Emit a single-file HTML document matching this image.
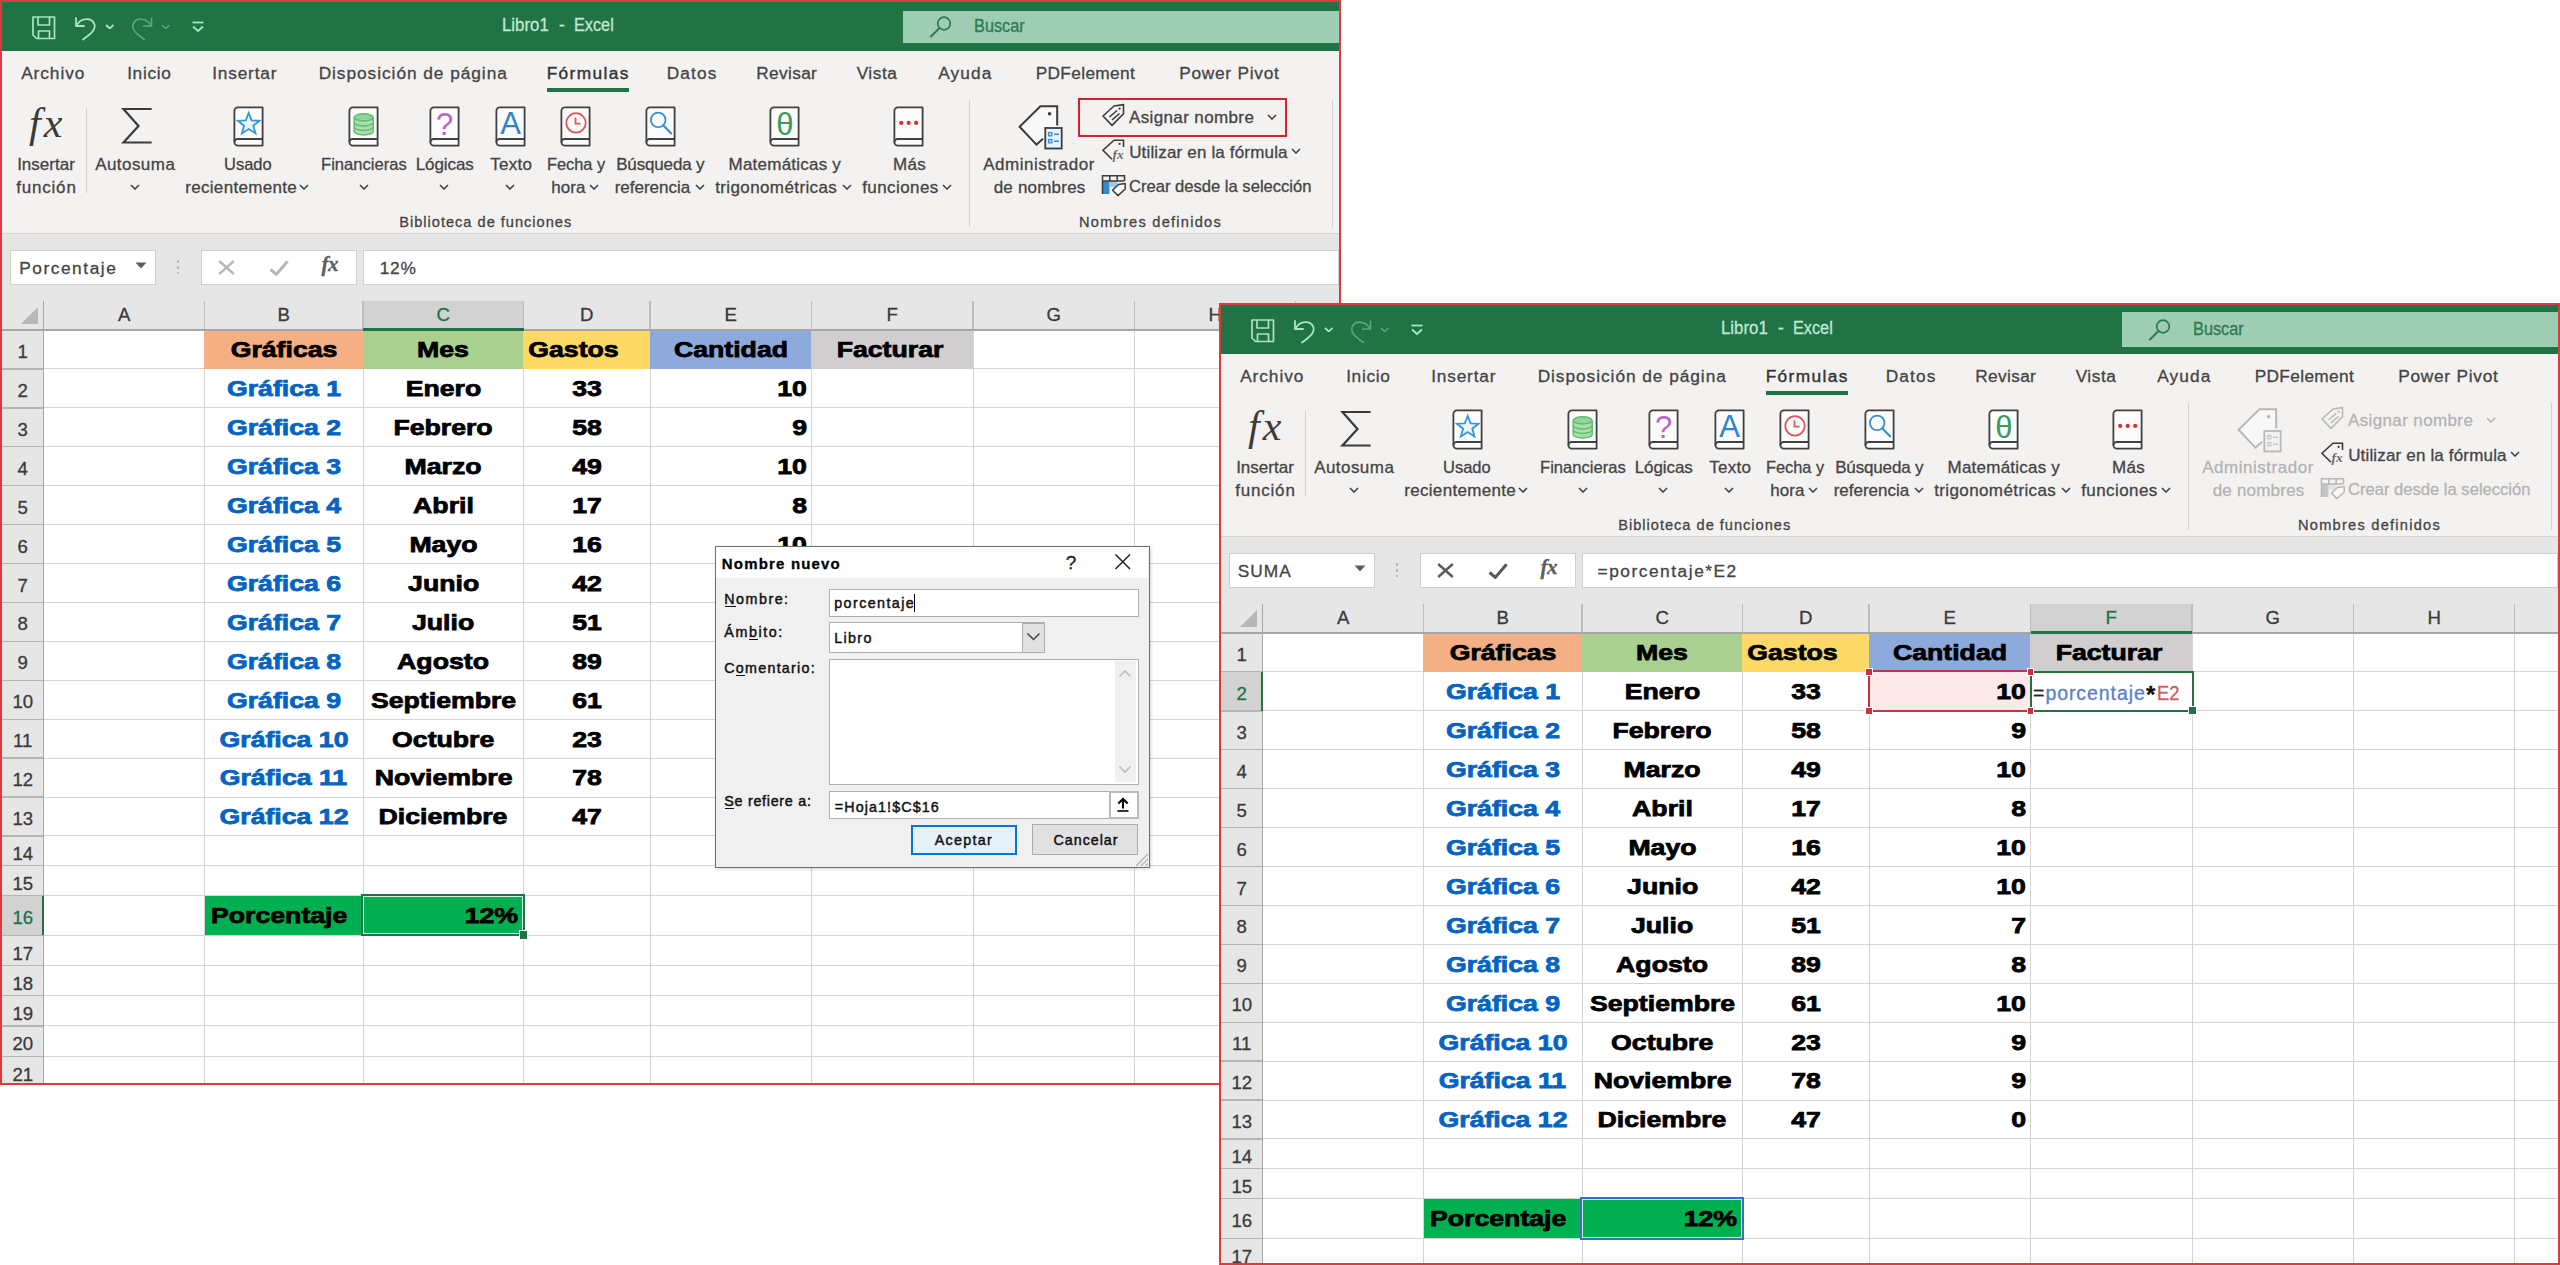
<!DOCTYPE html>
<html lang="es"><head><meta charset="utf-8"><title>Excel - Asignar nombre</title>
<style>
html,body{margin:0;padding:0;background:#fff}
body{width:2560px;height:1265px;position:relative;overflow:hidden;font-family:'Liberation Sans',sans-serif}
.win{position:absolute;overflow:hidden;background:#E6E6E6}
.win div,.win svg,.win span{position:absolute}
.win>div,.win>svg,.win>span{position:absolute}
.t{white-space:nowrap;line-height:1}
.frame{position:absolute;box-sizing:border-box;border:2px solid #DC3A3E;pointer-events:none;background:none}
</style></head>
<body>
<div class="win" style="left:0;top:0;width:1341px;height:1084.5px">
<div style="left:0px;top:0px;width:1341px;height:51px;background:#217346;"></div>
<div style="left:902.6px;top:10.6px;width:438.4px;height:32px;background:#9ECDB4;"></div>
<svg style="left:928px;top:14px" width="26" height="26" viewBox="0 0 26 26"><circle cx="16" cy="9.5" r="6.3" fill="none" stroke="#2C7A52" stroke-width="1.7"/><path d="M11.5,14 L3,22.5" stroke="#2C7A52" stroke-width="1.9" stroke-linecap="round"/></svg>
<span class="t" style="top:18px;font-size:17.6px;color:#2C7A52;-webkit-text-stroke:0.3px #2C7A52;left:974.18px;transform:scaleX(0.9269);transform-origin:left;">Buscar</span>
<span class="t" style="top:17px;font-size:17.6px;color:#BFE8D2;-webkit-text-stroke:0.3px #BFE8D2;left:502.16px;transform:scaleX(0.9558);transform-origin:left;">Libro1</span>
<span class="t" style="top:17px;font-size:17.6px;color:#BFE8D2;-webkit-text-stroke:0.3px #BFE8D2;left:559.00px;">-</span>
<span class="t" style="top:17px;font-size:17.6px;color:#BFE8D2;-webkit-text-stroke:0.3px #BFE8D2;left:574.19px;transform:scaleX(0.9240);transform-origin:left;">Excel</span>
<svg style="left:31px;top:15px" width="26" height="26" viewBox="0 0 26 26" fill="none" stroke="#A9E4C3" stroke-width="1.7" stroke-linejoin="round"><path d="M2,2 H23.5 V23.5 H5.5 L2,20 Z"/><path d="M7,2 V10 H18.5 V2"/><path d="M7.5,23.5 V16 H18.5 V23.5"/></svg>
<svg style="left:73px;top:15px" width="26" height="27" viewBox="0 0 26 27" fill="none" stroke="#A9E4C3" stroke-width="1.8" stroke-linecap="round" stroke-linejoin="round"><path d="M3,3 V11 H11"/><path d="M3.5,10.5 C8,2.5 19,2 21.5,9.5 C23,15 17,19.5 10,24.5"/></svg>
<svg style="left:104.7px;top:23.55px" width="9.6" height="5.5" viewBox="-1 -1 9.6 5.5"><path d="M0,0 L3.8,3.5 L7.6,0" fill="none" stroke="#A9E4C3" stroke-width="1.8"/></svg>
<svg style="left:130px;top:15px" width="26" height="27" viewBox="0 0 26 27" fill="none" stroke="#5FA47E" stroke-width="1.6" stroke-linecap="round" stroke-linejoin="round"><path d="M21.5,3 V11 H13.5"/><path d="M21,10.5 C16.5,2.5 5.5,2 3,9.5 C1.5,15 7.5,19.5 14.5,24.5"/></svg>
<svg style="left:161px;top:23.55px" width="9.6" height="5.5" viewBox="-1 -1 9.6 5.5"><path d="M0,0 L3.8,3.5 L7.6,0" fill="none" stroke="#5FA47E" stroke-width="1.5"/></svg>
<svg style="left:191px;top:21px" width="14" height="12" viewBox="0 0 14 12" fill="none" stroke="#A9E4C3" stroke-width="1.8"><path d="M1.5,1.5 H12.5"/><path d="M2,5.5 L7,10 L12,5.5"/></svg>
<div style="left:0px;top:51px;width:1341px;height:182px;background:#F3F2F1;"></div>
<div style="left:0px;top:232.5px;width:1341px;height:1.2px;background:#D6D4D2;"></div>
<span class="t" style="top:65px;font-size:17.3px;color:#444444;-webkit-text-stroke:0.3px #444444;left:21.14px;letter-spacing:0.934px;">Archivo</span>
<span class="t" style="top:65px;font-size:17.3px;color:#444444;-webkit-text-stroke:0.3px #444444;left:127.14px;letter-spacing:0.677px;">Inicio</span>
<span class="t" style="top:65px;font-size:17.3px;color:#444444;-webkit-text-stroke:0.3px #444444;left:212.13px;letter-spacing:0.819px;">Insertar</span>
<span class="t" style="top:65px;font-size:17.3px;color:#444444;-webkit-text-stroke:0.3px #444444;left:318.63px;letter-spacing:0.957px;">Disposición de página</span>
<span class="t" style="top:65px;font-size:17.3px;color:#444444;-webkit-text-stroke:0.3px #444444;left:666.63px;letter-spacing:1.168px;">Datos</span>
<span class="t" style="top:65px;font-size:17.3px;color:#444444;-webkit-text-stroke:0.3px #444444;left:756.13px;letter-spacing:0.359px;">Revisar</span>
<span class="t" style="top:65px;font-size:17.3px;color:#444444;-webkit-text-stroke:0.3px #444444;left:856.63px;letter-spacing:0.530px;">Vista</span>
<span class="t" style="top:65px;font-size:17.3px;color:#444444;-webkit-text-stroke:0.3px #444444;left:938.13px;letter-spacing:1.132px;">Ayuda</span>
<span class="t" style="top:65px;font-size:17.3px;color:#444444;-webkit-text-stroke:0.3px #444444;left:1035.63px;letter-spacing:0.354px;">PDFelement</span>
<span class="t" style="top:65px;font-size:17.3px;color:#444444;-webkit-text-stroke:0.3px #444444;left:1179.13px;letter-spacing:0.751px;">Power Pivot</span>
<span class="t" style="top:65px;font-size:17.3px;color:#333;-webkit-text-stroke:0.4px #333;left:546.63px;letter-spacing:1.386px;">Fórmulas</span>
<div style="left:547px;top:87.5px;width:82px;height:4px;background:#217346;"></div>
<span class="t" style="top:102px;font-size:42px;color:#3B3B3B;font-style:italic;font-family:'Liberation Serif',serif;left:29.00px;letter-spacing:3px;">fx</span>
<span class="t" style="top:156px;font-size:17px;color:#444444;-webkit-text-stroke:0.3px #444444;left:17.15px;letter-spacing:0.008px;">Insertar</span>
<span class="t" style="top:179px;font-size:17px;color:#444444;-webkit-text-stroke:0.3px #444444;left:16.15px;letter-spacing:0.812px;">función</span>
<div style="left:86px;top:108px;width:1px;height:85px;background:#D2D0CE;"></div>
<svg style="left:119px;top:105px" width="35" height="42" viewBox="0 0 35 42"><path d="M31.5,5 V4 H4.5 L19.5,21 L4.5,37.5 H31.5 V36.5" fill="none" stroke="#3B3B3B" stroke-width="2.2" stroke-linejoin="miter"/></svg>
<span class="t" style="top:156px;font-size:17px;color:#444444;-webkit-text-stroke:0.3px #444444;left:95.15px;letter-spacing:0.450px;">Autosuma</span>
<svg style="left:130px;top:184.4px" width="10" height="6" viewBox="-1 -1 10 6"><path d="M0,0 L4.0,4 L8,0" fill="none" stroke="#444444" stroke-width="1.6"/></svg>
<svg style="left:232.5px;top:105.5px" width="31" height="41" viewBox="0 0 31 41"><path d="M29.6,1.4 H5 a3.6,3.6 0 0 0 -3.6,3.6 V36 a3.6,3.6 0 0 0 3.6,3.6 H29.6 Z" fill="#FBFBFB" stroke="#404040" stroke-width="1.8" stroke-linejoin="round"/><path d="M1.4,36.3 a3.3,3.3 0 0 1 3.3,-3.3 H29.6" fill="none" stroke="#404040" stroke-width="1.8"/><g transform="translate(-0.8,-0.6)"><path d="M16.5,7.5 L19.4,15 L27.3,15.3 L21.1,20.3 L23.3,28 L16.5,23.6 L9.7,28 L11.9,20.3 L5.7,15.3 L13.6,15 Z" fill="#EAF6FD" stroke="#3A96D0" stroke-width="1.8" stroke-linejoin="miter"/></g></svg>
<span class="t" style="top:156px;font-size:17px;color:#444444;-webkit-text-stroke:0.3px #444444;left:224.17px;transform:scaleX(0.9707);transform-origin:left;">Usado</span>
<span class="t" style="top:179px;font-size:17px;color:#444444;-webkit-text-stroke:0.3px #444444;left:185.15px;letter-spacing:0.330px;">recientemente</span>
<svg style="left:299px;top:184.4px" width="10" height="6" viewBox="-1 -1 10 6"><path d="M0,0 L4.0,4 L8,0" fill="none" stroke="#444444" stroke-width="1.6"/></svg>
<svg style="left:347.8px;top:105.5px" width="31" height="41" viewBox="0 0 31 41"><path d="M29.6,1.4 H5 a3.6,3.6 0 0 0 -3.6,3.6 V36 a3.6,3.6 0 0 0 3.6,3.6 H29.6 Z" fill="#FBFBFB" stroke="#404040" stroke-width="1.8" stroke-linejoin="round"/><path d="M1.4,36.3 a3.3,3.3 0 0 1 3.3,-3.3 H29.6" fill="none" stroke="#404040" stroke-width="1.8"/><g transform="translate(-0.8,-0.6)"><g fill="#A9DDB0" stroke="#5DBB6A" stroke-width="1.4"><path d="M7,12 V26 a9.5,3.6 0 0 0 19,0 V12"/><path d="M7,21.5 a9.5,3.6 0 0 0 19,0" fill="none"/><path d="M7,17 a9.5,3.6 0 0 0 19,0" fill="none"/><ellipse cx="16.5" cy="12" rx="9.5" ry="3.6" fill="#8FD49A"/></g></g></svg>
<span class="t" style="top:156px;font-size:17px;color:#444444;-webkit-text-stroke:0.3px #444444;left:320.67px;transform:scaleX(0.9752);transform-origin:left;">Financieras</span>
<svg style="left:358.5px;top:184.4px" width="10" height="6" viewBox="-1 -1 10 6"><path d="M0,0 L4.0,4 L8,0" fill="none" stroke="#444444" stroke-width="1.6"/></svg>
<svg style="left:428.5px;top:105.5px" width="31" height="41" viewBox="0 0 31 41"><path d="M29.6,1.4 H5 a3.6,3.6 0 0 0 -3.6,3.6 V36 a3.6,3.6 0 0 0 3.6,3.6 H29.6 Z" fill="#FBFBFB" stroke="#404040" stroke-width="1.8" stroke-linejoin="round"/><path d="M1.4,36.3 a3.3,3.3 0 0 1 3.3,-3.3 H29.6" fill="none" stroke="#404040" stroke-width="1.8"/><g transform="translate(-0.8,-0.6)"><text x="16.5" y="29.5" text-anchor="middle" font-family="Liberation Sans,sans-serif" font-size="31" fill="#B862C9">?</text></g></svg>
<span class="t" style="top:156px;font-size:17px;color:#444444;-webkit-text-stroke:0.3px #444444;left:415.65px;letter-spacing:-0.068px;">Lógicas</span>
<svg style="left:439px;top:184.4px" width="10" height="6" viewBox="-1 -1 10 6"><path d="M0,0 L4.0,4 L8,0" fill="none" stroke="#444444" stroke-width="1.6"/></svg>
<svg style="left:494.8px;top:105.5px" width="31" height="41" viewBox="0 0 31 41"><path d="M29.6,1.4 H5 a3.6,3.6 0 0 0 -3.6,3.6 V36 a3.6,3.6 0 0 0 3.6,3.6 H29.6 Z" fill="#FBFBFB" stroke="#404040" stroke-width="1.8" stroke-linejoin="round"/><path d="M1.4,36.3 a3.3,3.3 0 0 1 3.3,-3.3 H29.6" fill="none" stroke="#404040" stroke-width="1.8"/><g transform="translate(-0.8,-0.6)"><text x="16.5" y="29" text-anchor="middle" font-family="Liberation Sans,sans-serif" font-size="31" fill="#2E86C8">A</text></g></svg>
<span class="t" style="top:156px;font-size:17px;color:#444444;-webkit-text-stroke:0.3px #444444;left:490.15px;letter-spacing:0.265px;">Texto</span>
<svg style="left:505px;top:184.4px" width="10" height="6" viewBox="-1 -1 10 6"><path d="M0,0 L4.0,4 L8,0" fill="none" stroke="#444444" stroke-width="1.6"/></svg>
<svg style="left:559.8px;top:105.5px" width="31" height="41" viewBox="0 0 31 41"><path d="M29.6,1.4 H5 a3.6,3.6 0 0 0 -3.6,3.6 V36 a3.6,3.6 0 0 0 3.6,3.6 H29.6 Z" fill="#FBFBFB" stroke="#404040" stroke-width="1.8" stroke-linejoin="round"/><path d="M1.4,36.3 a3.3,3.3 0 0 1 3.3,-3.3 H29.6" fill="none" stroke="#404040" stroke-width="1.8"/><g transform="translate(-0.8,-0.6)"><circle cx="16.8" cy="17.5" r="9.7" fill="none" stroke="#E0575B" stroke-width="1.8"/><path d="M16.3,12 V18.3 H21.3" fill="none" stroke="#E0575B" stroke-width="1.8"/></g></svg>
<span class="t" style="top:156px;font-size:17px;color:#444444;-webkit-text-stroke:0.3px #444444;left:546.68px;transform:scaleX(0.9622);transform-origin:left;">Fecha y</span>
<span class="t" style="top:179px;font-size:17px;color:#444444;-webkit-text-stroke:0.3px #444444;left:551.15px;letter-spacing:0.056px;">hora</span>
<svg style="left:589px;top:184.4px" width="10" height="6" viewBox="-1 -1 10 6"><path d="M0,0 L4.0,4 L8,0" fill="none" stroke="#444444" stroke-width="1.6"/></svg>
<svg style="left:644.8px;top:105.5px" width="31" height="41" viewBox="0 0 31 41"><path d="M29.6,1.4 H5 a3.6,3.6 0 0 0 -3.6,3.6 V36 a3.6,3.6 0 0 0 3.6,3.6 H29.6 Z" fill="#FBFBFB" stroke="#404040" stroke-width="1.8" stroke-linejoin="round"/><path d="M1.4,36.3 a3.3,3.3 0 0 1 3.3,-3.3 H29.6" fill="none" stroke="#404040" stroke-width="1.8"/><g transform="translate(-0.8,-0.6)"><circle cx="14" cy="14.5" r="7.3" fill="none" stroke="#3A8FD0" stroke-width="1.8"/><path d="M19.3,20 L27,28" stroke="#3A8FD0" stroke-width="2.2" stroke-linecap="round"/></g></svg>
<span class="t" style="top:156px;font-size:17px;color:#444444;-webkit-text-stroke:0.3px #444444;left:616.15px;letter-spacing:-0.150px;">Búsqueda y</span>
<span class="t" style="top:179px;font-size:17px;color:#444444;-webkit-text-stroke:0.3px #444444;left:614.65px;letter-spacing:-0.001px;">referencia</span>
<svg style="left:694.5px;top:184.4px" width="10" height="6" viewBox="-1 -1 10 6"><path d="M0,0 L4.0,4 L8,0" fill="none" stroke="#444444" stroke-width="1.6"/></svg>
<svg style="left:768.5px;top:105.5px" width="31" height="41" viewBox="0 0 31 41"><path d="M29.6,1.4 H5 a3.6,3.6 0 0 0 -3.6,3.6 V36 a3.6,3.6 0 0 0 3.6,3.6 H29.6 Z" fill="#FBFBFB" stroke="#404040" stroke-width="1.8" stroke-linejoin="round"/><path d="M1.4,36.3 a3.3,3.3 0 0 1 3.3,-3.3 H29.6" fill="none" stroke="#404040" stroke-width="1.8"/><g transform="translate(-0.8,-0.6)"><text x="16.6" y="29.3" text-anchor="middle" font-family="Liberation Sans,sans-serif" font-size="31" fill="#3C9A5F">θ</text></g></svg>
<span class="t" style="top:156px;font-size:17px;color:#444444;-webkit-text-stroke:0.3px #444444;left:728.55px;letter-spacing:0.226px;">Matemáticas y</span>
<span class="t" style="top:179px;font-size:17px;color:#444444;-webkit-text-stroke:0.3px #444444;left:715.15px;letter-spacing:0.392px;">trigonométricas</span>
<svg style="left:842px;top:184.4px" width="10" height="6" viewBox="-1 -1 10 6"><path d="M0,0 L4.0,4 L8,0" fill="none" stroke="#444444" stroke-width="1.6"/></svg>
<svg style="left:892.7px;top:105.5px" width="31" height="41" viewBox="0 0 31 41"><path d="M29.6,1.4 H5 a3.6,3.6 0 0 0 -3.6,3.6 V36 a3.6,3.6 0 0 0 3.6,3.6 H29.6 Z" fill="#FBFBFB" stroke="#404040" stroke-width="1.8" stroke-linejoin="round"/><path d="M1.4,36.3 a3.3,3.3 0 0 1 3.3,-3.3 H29.6" fill="none" stroke="#404040" stroke-width="1.8"/><g transform="translate(-0.8,-0.6)"><circle cx="9" cy="17.5" r="2.1" fill="#D13438"/><circle cx="16.5" cy="17.5" r="2.1" fill="#D13438"/><circle cx="24" cy="17.5" r="2.1" fill="#D13438"/></g></svg>
<span class="t" style="top:156px;font-size:17px;color:#444444;-webkit-text-stroke:0.3px #444444;left:892.90px;letter-spacing:0.413px;">Más</span>
<span class="t" style="top:179px;font-size:17px;color:#444444;-webkit-text-stroke:0.3px #444444;left:862.15px;letter-spacing:0.427px;">funciones</span>
<svg style="left:942px;top:184.4px" width="10" height="6" viewBox="-1 -1 10 6"><path d="M0,0 L4.0,4 L8,0" fill="none" stroke="#444444" stroke-width="1.6"/></svg>
<span class="t" style="top:215px;font-size:14.6px;color:#444444;-webkit-text-stroke:0.3px #444444;left:399.27px;letter-spacing:0.994px;">Biblioteca de funciones</span>
<div style="left:968.5px;top:100px;width:1px;height:127px;background:#D2D0CE;"></div>
<div style="left:1331.5px;top:100px;width:1px;height:127px;background:#D2D0CE;"></div>
<svg style="left:1015px;top:102px" width="50" height="50" viewBox="0 0 50 50" fill="none"><path d="M42.2,23.5 V4.3 H25.4 L4.6,24.7 L21.5,42.6 L28,36.8" fill="#F8F8F8" stroke="#3B3B3B" stroke-width="2" stroke-linejoin="miter"/><circle cx="34.6" cy="11.7" r="1.8" fill="#3B3B3B"/><rect x="30.3" y="26" width="16.4" height="20.5" fill="#E6F3FC" stroke="#3B3B3B" stroke-width="1.8"/><rect x="33.6" y="30.6" width="3.2" height="3.2" stroke="#2E8DD6" stroke-width="1.3"/><rect x="33.6" y="37.6" width="3.2" height="3.2" stroke="#2E8DD6" stroke-width="1.3"/><path d="M39,32.2 H44 M39,39.2 H44" stroke="#2E8DD6" stroke-width="1.4"/></svg>
<span class="t" style="top:156px;font-size:17px;color:#444444;-webkit-text-stroke:0.3px #444444;left:983.15px;letter-spacing:0.535px;">Administrador</span>
<span class="t" style="top:179px;font-size:17px;color:#444444;-webkit-text-stroke:0.3px #444444;left:993.65px;letter-spacing:0.213px;">de nombres</span>
<svg style="left:1100px;top:102px" width="26" height="26" viewBox="0 0 26 26" fill="none" stroke="#3B3B3B" stroke-width="1.6" stroke-linejoin="round"><path d="M3,14 L14,4 L23.5,2.6 V11.8 L12,23.4 Z"/><path d="M9.5,15 L17,8.5 M12,18 L19.5,11.5"/><circle cx="19.6" cy="6.7" r="1.1" fill="#3B3B3B" stroke="none"/></svg>
<span class="t" style="top:109px;font-size:17px;color:#444444;-webkit-text-stroke:0.3px #444444;left:1128.95px;letter-spacing:0.376px;">Asignar nombre</span>
<svg style="left:1267px;top:113.5px" width="10" height="6" viewBox="-1 -1 10 6"><path d="M0,0 L4.0,4 L8,0" fill="none" stroke="#444444" stroke-width="1.6"/></svg>
<div style="left:1078.4px;top:97.8px;width:204.6px;height:35.2px;border:2px solid #D2232A;background:none"></div>
<svg style="left:1100px;top:137px" width="28" height="28" viewBox="0 0 28 28" fill="none" stroke="#3B3B3B" stroke-width="1.6" stroke-linejoin="miter"><path d="M23.5,10 V3.2 H14 L3,13.2 L12,22.3"/><circle cx="19.6" cy="6.9" r="1.1" fill="#3B3B3B" stroke="none"/><text x="12.5" y="21.8" font-family="Liberation Serif,serif" font-style="italic" font-weight="bold" font-size="13.5" fill="#6A6A6A" stroke="none">fx</text></svg>
<span class="t" style="top:144px;font-size:17px;color:#444444;-webkit-text-stroke:0.3px #444444;left:1129.15px;letter-spacing:0.164px;">Utilizar en la fórmula</span>
<svg style="left:1291px;top:147.5px" width="10" height="6" viewBox="-1 -1 10 6"><path d="M0,0 L4.0,4 L8,0" fill="none" stroke="#444444" stroke-width="1.6"/></svg>
<svg style="left:1100px;top:173px" width="28" height="24" viewBox="0 0 28 24" fill="none"><rect x="2" y="8" width="7.5" height="6" fill="#2E8DD6"/><rect x="9.5" y="8" width="8" height="6" fill="#9CCBEF"/><rect x="2" y="14" width="7.5" height="7" fill="#2E8DD6"/><path d="M2.5,21 V2.8 H24.5 V8 M2.5,8 H24 M9.8,3 V8 M17.2,3 V8" stroke="#3B3B3B" stroke-width="1.5"/><path d="M12.5,17.3 L18.5,11.5 L25.2,10.6 V16 L18,22.6 Z" fill="#F8F8F8" stroke="#3B3B3B" stroke-width="1.5" stroke-linejoin="round"/></svg>
<span class="t" style="top:178px;font-size:17px;color:#444444;-webkit-text-stroke:0.3px #444444;left:1129.17px;transform:scaleX(0.9754);transform-origin:left;">Crear desde la selección</span>
<span class="t" style="top:215px;font-size:14.6px;color:#444444;-webkit-text-stroke:0.3px #444444;left:1079.07px;letter-spacing:1.248px;">Nombres definidos</span>
<div style="left:0px;top:233.7px;width:1341px;height:97px;background:#E6E6E6;"></div>
<div style="left:10px;top:249.5px;width:145.5px;height:35.5px;background:#fff;border:1px solid #CFCFCF;box-sizing:border-box;"></div>
<div style="left:200.5px;top:249.5px;width:156.5px;height:35.5px;background:#fff;border:1px solid #CFCFCF;box-sizing:border-box;"></div>
<div style="left:363px;top:249.5px;width:976px;height:35.5px;background:#fff;border:1px solid #CFCFCF;box-sizing:border-box;"></div>
<div style="left:176.7px;top:260.1px;width:2.5px;height:2.5px;background:#B0B0B0;border-radius:50%;"></div>
<div style="left:176.7px;top:266px;width:2.5px;height:2.5px;background:#B0B0B0;border-radius:50%;"></div>
<div style="left:176.7px;top:271.8px;width:2.5px;height:2.5px;background:#B0B0B0;border-radius:50%;"></div>
<svg style="left:135px;top:262px" width="12" height="7" viewBox="0 0 12 7"><path d="M0.5,0.5 H11.5 L6,6.5 Z" fill="#5E5E5E"/></svg>
<svg style="left:218px;top:260px" width="17" height="15" viewBox="0 0 17 15"><path d="M1.2,1 L15.8,14 M15.8,1 L1.2,14" stroke="#B9B9B9" stroke-width="2.4"/></svg>
<svg style="left:269px;top:259px" width="20" height="17" viewBox="0 0 20 17"><path d="M1.6,10.5 L7.3,15.4 L18.6,2.2" fill="none" stroke="#B9B9B9" stroke-width="3.1"/></svg>
<span class="t" style="top:254px;font-size:21px;color:#5E5E5E;font-weight:bold;font-style:italic;font-family:'Liberation Serif',serif;-webkit-text-stroke:0.3px #5E5E5E;left:321.50px;letter-spacing:-0.5px;">fx</span>
<span class="t" style="top:260px;font-size:17.3px;color:#444444;-webkit-text-stroke:0.3px #444444;left:19.14px;letter-spacing:1.567px;">Porcentaje</span>
<span class="t" style="top:260px;font-size:17.3px;color:#444444;-webkit-text-stroke:0.3px #444444;left:379.63px;letter-spacing:0.818px;">12%</span>
<div style="left:44px;top:331px;width:1297px;height:753.5px;background:#fff;"></div>
<div style="left:204.5px;top:331px;width:158.5px;height:37.42px;background:#F4B084;"></div>
<div style="left:363px;top:331px;width:160.5px;height:37.42px;background:#A9D08E;"></div>
<div style="left:523.5px;top:331px;width:126.5px;height:37.42px;background:#FFD966;"></div>
<div style="left:650px;top:331px;width:161.5px;height:37.42px;background:#8EA9DB;"></div>
<div style="left:811.5px;top:331px;width:161.5px;height:37.42px;background:#D0CECE;"></div>
<div style="left:204.5px;top:895.8px;width:319px;height:39.4px;background:#00B050;"></div>
<div style="left:204px;top:331px;width:1px;height:753.5px;background:#D4D4D4;"></div>
<div style="left:362.5px;top:331px;width:1px;height:753.5px;background:#D4D4D4;"></div>
<div style="left:523px;top:331px;width:1px;height:753.5px;background:#D4D4D4;"></div>
<div style="left:649.5px;top:331px;width:1px;height:753.5px;background:#D4D4D4;"></div>
<div style="left:811px;top:331px;width:1px;height:753.5px;background:#D4D4D4;"></div>
<div style="left:972.5px;top:331px;width:1px;height:753.5px;background:#D4D4D4;"></div>
<div style="left:1133.9px;top:331px;width:1px;height:753.5px;background:#D4D4D4;"></div>
<div style="left:1295.3px;top:331px;width:1px;height:753.5px;background:#D4D4D4;"></div>
<div style="left:44px;top:368.42px;width:1297px;height:1px;background:#D4D4D4;"></div>
<div style="left:44px;top:407.34px;width:1297px;height:1px;background:#D4D4D4;"></div>
<div style="left:44px;top:446.26px;width:1297px;height:1px;background:#D4D4D4;"></div>
<div style="left:44px;top:485.18px;width:1297px;height:1px;background:#D4D4D4;"></div>
<div style="left:44px;top:524.1px;width:1297px;height:1px;background:#D4D4D4;"></div>
<div style="left:44px;top:563.02px;width:1297px;height:1px;background:#D4D4D4;"></div>
<div style="left:44px;top:601.94px;width:1297px;height:1px;background:#D4D4D4;"></div>
<div style="left:44px;top:640.86px;width:1297px;height:1px;background:#D4D4D4;"></div>
<div style="left:44px;top:679.78px;width:1297px;height:1px;background:#D4D4D4;"></div>
<div style="left:44px;top:718.7px;width:1297px;height:1px;background:#D4D4D4;"></div>
<div style="left:44px;top:757.62px;width:1297px;height:1px;background:#D4D4D4;"></div>
<div style="left:44px;top:796.54px;width:1297px;height:1px;background:#D4D4D4;"></div>
<div style="left:44px;top:835.46px;width:1297px;height:1px;background:#D4D4D4;"></div>
<div style="left:44px;top:865.3px;width:1297px;height:1px;background:#D4D4D4;"></div>
<div style="left:44px;top:895.3px;width:1297px;height:1px;background:#D4D4D4;"></div>
<div style="left:44px;top:934.7px;width:1297px;height:1px;background:#D4D4D4;"></div>
<div style="left:44px;top:964.95px;width:1297px;height:1px;background:#D4D4D4;"></div>
<div style="left:44px;top:995.2px;width:1297px;height:1px;background:#D4D4D4;"></div>
<div style="left:44px;top:1025.45px;width:1297px;height:1px;background:#D4D4D4;"></div>
<div style="left:44px;top:1055.7px;width:1297px;height:1px;background:#D4D4D4;"></div>
<div style="left:204px;top:331px;width:159.2px;height:38.32px;background:#F4B084;"></div>
<div style="left:362.5px;top:331px;width:161.2px;height:38.32px;background:#A9D08E;"></div>
<div style="left:523px;top:331px;width:127.2px;height:38.32px;background:#FFD966;"></div>
<div style="left:649.5px;top:331px;width:162.2px;height:38.32px;background:#8EA9DB;"></div>
<div style="left:811px;top:331px;width:161.5px;height:38.32px;background:#D0CECE;"></div>
<div style="left:362.5px;top:896.3px;width:1px;height:38.4px;background:#00B050;"></div>
<div style="left:0px;top:300px;width:44px;height:784.5px;background:#E6E6E6;"></div>
<span class="t" style="top:306px;font-size:18.6px;color:#3A3A3A;-webkit-text-stroke:0.3px #3A3A3A;left:118.05px;">A</span>
<span class="t" style="top:306px;font-size:18.6px;color:#3A3A3A;-webkit-text-stroke:0.3px #3A3A3A;left:277.55px;">B</span>
<div style="left:363.5px;top:300.5px;width:160px;height:29px;background:#D2D2D2;"></div>
<span class="t" style="top:306px;font-size:18.6px;color:#217346;-webkit-text-stroke:0.3px #217346;left:436.53px;">C</span>
<span class="t" style="top:306px;font-size:18.6px;color:#3A3A3A;-webkit-text-stroke:0.3px #3A3A3A;left:580.03px;">D</span>
<span class="t" style="top:306px;font-size:18.6px;color:#3A3A3A;-webkit-text-stroke:0.3px #3A3A3A;left:724.55px;">E</span>
<span class="t" style="top:306px;font-size:18.6px;color:#3A3A3A;-webkit-text-stroke:0.3px #3A3A3A;left:886.57px;">F</span>
<span class="t" style="top:306px;font-size:18.6px;color:#3A3A3A;-webkit-text-stroke:0.3px #3A3A3A;left:1046.47px;">G</span>
<span class="t" style="top:306px;font-size:18.6px;color:#3A3A3A;-webkit-text-stroke:0.3px #3A3A3A;left:1208.38px;">H</span>
<span class="t" style="top:306px;font-size:18.6px;color:#3A3A3A;-webkit-text-stroke:0.3px #3A3A3A;left:1373.81px;">I</span>
<div style="left:203.9px;top:300.5px;width:1.3px;height:30px;background:#BDBDBD;"></div>
<div style="left:362.4px;top:300.5px;width:1.3px;height:30px;background:#BDBDBD;"></div>
<div style="left:522.9px;top:300.5px;width:1.3px;height:30px;background:#BDBDBD;"></div>
<div style="left:649.4px;top:300.5px;width:1.3px;height:30px;background:#BDBDBD;"></div>
<div style="left:810.9px;top:300.5px;width:1.3px;height:30px;background:#BDBDBD;"></div>
<div style="left:972.4px;top:300.5px;width:1.3px;height:30px;background:#BDBDBD;"></div>
<div style="left:1133.8px;top:300.5px;width:1.3px;height:30px;background:#BDBDBD;"></div>
<div style="left:1295.2px;top:300.5px;width:1.3px;height:30px;background:#BDBDBD;"></div>
<div style="left:0px;top:329.3px;width:1341px;height:1.6px;background:#A6A6A6;"></div>
<div style="left:363px;top:328px;width:160.5px;height:3px;background:#217346;"></div>
<svg style="left:20px;top:306px" width="19" height="19" viewBox="0 0 19 19"><path d="M18,1 V18 H1 Z" fill="#B7B7B7"/></svg>
<div style="left:0px;top:368.22px;width:43px;height:1.4px;background:#B4B4B4;"></div>
<span class="t" style="top:343px;font-size:18.6px;color:#3A3A3A;-webkit-text-stroke:0.3px #3A3A3A;left:17.58px;">1</span>
<div style="left:0px;top:407.14px;width:43px;height:1.4px;background:#B4B4B4;"></div>
<span class="t" style="top:382px;font-size:18.6px;color:#3A3A3A;-webkit-text-stroke:0.3px #3A3A3A;left:17.58px;">2</span>
<div style="left:0px;top:446.06px;width:43px;height:1.4px;background:#B4B4B4;"></div>
<span class="t" style="top:421px;font-size:18.6px;color:#3A3A3A;-webkit-text-stroke:0.3px #3A3A3A;left:17.58px;">3</span>
<div style="left:0px;top:484.98px;width:43px;height:1.4px;background:#B4B4B4;"></div>
<span class="t" style="top:460px;font-size:18.6px;color:#3A3A3A;-webkit-text-stroke:0.3px #3A3A3A;left:17.58px;">4</span>
<div style="left:0px;top:523.9px;width:43px;height:1.4px;background:#B4B4B4;"></div>
<span class="t" style="top:499px;font-size:18.6px;color:#3A3A3A;-webkit-text-stroke:0.3px #3A3A3A;left:17.58px;">5</span>
<div style="left:0px;top:562.82px;width:43px;height:1.4px;background:#B4B4B4;"></div>
<span class="t" style="top:538px;font-size:18.6px;color:#3A3A3A;-webkit-text-stroke:0.3px #3A3A3A;left:17.58px;">6</span>
<div style="left:0px;top:601.74px;width:43px;height:1.4px;background:#B4B4B4;"></div>
<span class="t" style="top:577px;font-size:18.6px;color:#3A3A3A;-webkit-text-stroke:0.3px #3A3A3A;left:17.58px;">7</span>
<div style="left:0px;top:640.66px;width:43px;height:1.4px;background:#B4B4B4;"></div>
<span class="t" style="top:615px;font-size:18.6px;color:#3A3A3A;-webkit-text-stroke:0.3px #3A3A3A;left:17.58px;">8</span>
<div style="left:0px;top:679.58px;width:43px;height:1.4px;background:#B4B4B4;"></div>
<span class="t" style="top:654px;font-size:18.6px;color:#3A3A3A;-webkit-text-stroke:0.3px #3A3A3A;left:17.58px;">9</span>
<div style="left:0px;top:718.5px;width:43px;height:1.4px;background:#B4B4B4;"></div>
<span class="t" style="top:693px;font-size:18.6px;color:#3A3A3A;-webkit-text-stroke:0.3px #3A3A3A;left:12.41px;">10</span>
<div style="left:0px;top:757.42px;width:43px;height:1.4px;background:#B4B4B4;"></div>
<span class="t" style="top:732px;font-size:18.6px;color:#3A3A3A;-webkit-text-stroke:0.3px #3A3A3A;left:13.09px;">11</span>
<div style="left:0px;top:796.34px;width:43px;height:1.4px;background:#B4B4B4;"></div>
<span class="t" style="top:771px;font-size:18.6px;color:#3A3A3A;-webkit-text-stroke:0.3px #3A3A3A;left:12.41px;">12</span>
<div style="left:0px;top:835.26px;width:43px;height:1.4px;background:#B4B4B4;"></div>
<span class="t" style="top:810px;font-size:18.6px;color:#3A3A3A;-webkit-text-stroke:0.3px #3A3A3A;left:12.41px;">13</span>
<div style="left:0px;top:865.1px;width:43px;height:1.4px;background:#B4B4B4;"></div>
<span class="t" style="top:845px;font-size:18.6px;color:#3A3A3A;-webkit-text-stroke:0.3px #3A3A3A;left:12.41px;">14</span>
<div style="left:0px;top:895.1px;width:43px;height:1.4px;background:#B4B4B4;"></div>
<span class="t" style="top:875px;font-size:18.6px;color:#3A3A3A;-webkit-text-stroke:0.3px #3A3A3A;left:12.41px;">15</span>
<div style="left:0px;top:896.3px;width:43px;height:38.9px;background:#D2D2D2;"></div>
<div style="left:0px;top:934.5px;width:43px;height:1.4px;background:#B4B4B4;"></div>
<span class="t" style="top:909px;font-size:18.6px;color:#217346;-webkit-text-stroke:0.3px #217346;left:12.41px;">16</span>
<div style="left:0px;top:964.75px;width:43px;height:1.4px;background:#B4B4B4;"></div>
<span class="t" style="top:945px;font-size:18.6px;color:#3A3A3A;-webkit-text-stroke:0.3px #3A3A3A;left:12.41px;">17</span>
<div style="left:0px;top:995px;width:43px;height:1.4px;background:#B4B4B4;"></div>
<span class="t" style="top:975px;font-size:18.6px;color:#3A3A3A;-webkit-text-stroke:0.3px #3A3A3A;left:12.41px;">18</span>
<div style="left:0px;top:1025.25px;width:43px;height:1.4px;background:#B4B4B4;"></div>
<span class="t" style="top:1005px;font-size:18.6px;color:#3A3A3A;-webkit-text-stroke:0.3px #3A3A3A;left:12.41px;">19</span>
<div style="left:0px;top:1055.5px;width:43px;height:1.4px;background:#B4B4B4;"></div>
<span class="t" style="top:1035px;font-size:18.6px;color:#3A3A3A;-webkit-text-stroke:0.3px #3A3A3A;left:12.41px;">20</span>
<div style="left:0px;top:1085.75px;width:43px;height:1.4px;background:#B4B4B4;"></div>
<span class="t" style="top:1066px;font-size:18.6px;color:#3A3A3A;-webkit-text-stroke:0.3px #3A3A3A;left:12.41px;">21</span>
<div style="left:42.8px;top:300.5px;width:1.4px;height:784.5px;background:#A6A6A6;"></div>
<div style="left:41.5px;top:895.8px;width:2.7px;height:39.4px;background:#217346;"></div>
<span class="t" style="top:340px;font-size:21.5px;color:#000;font-weight:bold;-webkit-text-stroke:0.75px #000;left:240.72px;transform:scaleX(1.24);transform-origin:center;">Gráficas</span>
<span class="t" style="top:340px;font-size:21.5px;color:#000;font-weight:bold;-webkit-text-stroke:0.75px #000;left:422.34px;transform:scaleX(1.24);transform-origin:center;">Mes</span>
<span class="t" style="top:340px;font-size:21.5px;color:#000;font-weight:bold;-webkit-text-stroke:0.75px #000;left:536.80px;transform:scaleX(1.24);transform-origin:center;">Gastos</span>
<span class="t" style="top:340px;font-size:21.5px;color:#000;font-weight:bold;-webkit-text-stroke:0.75px #000;left:684.76px;transform:scaleX(1.24);transform-origin:center;">Cantidad</span>
<span class="t" style="top:340px;font-size:21.5px;color:#000;font-weight:bold;-webkit-text-stroke:0.75px #000;left:846.73px;transform:scaleX(1.24);transform-origin:center;">Facturar</span>
<span class="t" style="top:379px;font-size:21.5px;color:#0563C1;font-weight:bold;-webkit-text-stroke:0.75px #0563C1;left:237.73px;transform:scaleX(1.24);transform-origin:center;">Gráfica 1</span>
<span class="t" style="top:379px;font-size:21.5px;color:#000;font-weight:bold;-webkit-text-stroke:0.75px #000;left:412.78px;transform:scaleX(1.24);transform-origin:center;">Enero</span>
<span class="t" style="top:379px;font-size:21.5px;color:#000;font-weight:bold;-webkit-text-stroke:0.75px #000;left:574.79px;transform:scaleX(1.24);transform-origin:center;">33</span>
<span class="t" style="top:418px;font-size:21.5px;color:#0563C1;font-weight:bold;-webkit-text-stroke:0.75px #0563C1;left:237.73px;transform:scaleX(1.24);transform-origin:center;">Gráfica 2</span>
<span class="t" style="top:418px;font-size:21.5px;color:#000;font-weight:bold;-webkit-text-stroke:0.75px #000;left:403.22px;transform:scaleX(1.24);transform-origin:center;">Febrero</span>
<span class="t" style="top:418px;font-size:21.5px;color:#000;font-weight:bold;-webkit-text-stroke:0.75px #000;left:574.79px;transform:scaleX(1.24);transform-origin:center;">58</span>
<span class="t" style="top:457px;font-size:21.5px;color:#0563C1;font-weight:bold;-webkit-text-stroke:0.75px #0563C1;left:237.73px;transform:scaleX(1.24);transform-origin:center;">Gráfica 3</span>
<span class="t" style="top:457px;font-size:21.5px;color:#000;font-weight:bold;-webkit-text-stroke:0.75px #000;left:412.19px;transform:scaleX(1.24);transform-origin:center;">Marzo</span>
<span class="t" style="top:457px;font-size:21.5px;color:#000;font-weight:bold;-webkit-text-stroke:0.75px #000;left:574.79px;transform:scaleX(1.24);transform-origin:center;">49</span>
<span class="t" style="top:496px;font-size:21.5px;color:#0563C1;font-weight:bold;-webkit-text-stroke:0.75px #0563C1;left:237.73px;transform:scaleX(1.24);transform-origin:center;">Gráfica 4</span>
<span class="t" style="top:496px;font-size:21.5px;color:#000;font-weight:bold;-webkit-text-stroke:0.75px #000;left:418.76px;transform:scaleX(1.24);transform-origin:center;">Abril</span>
<span class="t" style="top:496px;font-size:21.5px;color:#000;font-weight:bold;-webkit-text-stroke:0.75px #000;left:574.79px;transform:scaleX(1.24);transform-origin:center;">17</span>
<span class="t" style="top:535px;font-size:21.5px;color:#0563C1;font-weight:bold;-webkit-text-stroke:0.75px #0563C1;left:237.73px;transform:scaleX(1.24);transform-origin:center;">Gráfica 5</span>
<span class="t" style="top:535px;font-size:21.5px;color:#000;font-weight:bold;-webkit-text-stroke:0.75px #000;left:415.77px;transform:scaleX(1.24);transform-origin:center;">Mayo</span>
<span class="t" style="top:535px;font-size:21.5px;color:#000;font-weight:bold;-webkit-text-stroke:0.75px #000;left:574.79px;transform:scaleX(1.24);transform-origin:center;">16</span>
<span class="t" style="top:574px;font-size:21.5px;color:#0563C1;font-weight:bold;-webkit-text-stroke:0.75px #0563C1;left:237.73px;transform:scaleX(1.24);transform-origin:center;">Gráfica 6</span>
<span class="t" style="top:574px;font-size:21.5px;color:#000;font-weight:bold;-webkit-text-stroke:0.75px #000;left:414.58px;transform:scaleX(1.24);transform-origin:center;">Junio</span>
<span class="t" style="top:574px;font-size:21.5px;color:#000;font-weight:bold;-webkit-text-stroke:0.75px #000;left:574.79px;transform:scaleX(1.24);transform-origin:center;">42</span>
<span class="t" style="top:613px;font-size:21.5px;color:#0563C1;font-weight:bold;-webkit-text-stroke:0.75px #0563C1;left:237.73px;transform:scaleX(1.24);transform-origin:center;">Gráfica 7</span>
<span class="t" style="top:613px;font-size:21.5px;color:#000;font-weight:bold;-webkit-text-stroke:0.75px #000;left:418.16px;transform:scaleX(1.24);transform-origin:center;">Julio</span>
<span class="t" style="top:613px;font-size:21.5px;color:#000;font-weight:bold;-webkit-text-stroke:0.75px #000;left:574.79px;transform:scaleX(1.24);transform-origin:center;">51</span>
<span class="t" style="top:652px;font-size:21.5px;color:#0563C1;font-weight:bold;-webkit-text-stroke:0.75px #0563C1;left:237.73px;transform:scaleX(1.24);transform-origin:center;">Gráfica 8</span>
<span class="t" style="top:652px;font-size:21.5px;color:#000;font-weight:bold;-webkit-text-stroke:0.75px #000;left:406.23px;transform:scaleX(1.24);transform-origin:center;">Agosto</span>
<span class="t" style="top:652px;font-size:21.5px;color:#000;font-weight:bold;-webkit-text-stroke:0.75px #000;left:574.79px;transform:scaleX(1.24);transform-origin:center;">89</span>
<span class="t" style="top:691px;font-size:21.5px;color:#0563C1;font-weight:bold;-webkit-text-stroke:0.75px #0563C1;left:237.73px;transform:scaleX(1.24);transform-origin:center;">Gráfica 9</span>
<span class="t" style="top:691px;font-size:21.5px;color:#000;font-weight:bold;-webkit-text-stroke:0.75px #000;left:384.70px;transform:scaleX(1.24);transform-origin:center;">Septiembre</span>
<span class="t" style="top:691px;font-size:21.5px;color:#000;font-weight:bold;-webkit-text-stroke:0.75px #000;left:574.79px;transform:scaleX(1.24);transform-origin:center;">61</span>
<span class="t" style="top:730px;font-size:21.5px;color:#0563C1;font-weight:bold;-webkit-text-stroke:0.75px #0563C1;left:231.76px;transform:scaleX(1.24);transform-origin:center;">Gráfica 10</span>
<span class="t" style="top:730px;font-size:21.5px;color:#000;font-weight:bold;-webkit-text-stroke:0.75px #000;left:402.03px;transform:scaleX(1.24);transform-origin:center;">Octubre</span>
<span class="t" style="top:730px;font-size:21.5px;color:#000;font-weight:bold;-webkit-text-stroke:0.75px #000;left:574.79px;transform:scaleX(1.24);transform-origin:center;">23</span>
<span class="t" style="top:768px;font-size:21.5px;color:#0563C1;font-weight:bold;-webkit-text-stroke:0.75px #0563C1;left:232.35px;transform:scaleX(1.24);transform-origin:center;">Gráfica 11</span>
<span class="t" style="top:768px;font-size:21.5px;color:#000;font-weight:bold;-webkit-text-stroke:0.75px #000;left:387.69px;transform:scaleX(1.24);transform-origin:center;">Noviembre</span>
<span class="t" style="top:768px;font-size:21.5px;color:#000;font-weight:bold;-webkit-text-stroke:0.75px #000;left:574.79px;transform:scaleX(1.24);transform-origin:center;">78</span>
<span class="t" style="top:807px;font-size:21.5px;color:#0563C1;font-weight:bold;-webkit-text-stroke:0.75px #0563C1;left:231.76px;transform:scaleX(1.24);transform-origin:center;">Gráfica 12</span>
<span class="t" style="top:807px;font-size:21.5px;color:#000;font-weight:bold;-webkit-text-stroke:0.75px #000;left:391.27px;transform:scaleX(1.24);transform-origin:center;">Diciembre</span>
<span class="t" style="top:807px;font-size:21.5px;color:#000;font-weight:bold;-webkit-text-stroke:0.75px #000;left:574.79px;transform:scaleX(1.24);transform-origin:center;">47</span>
<span class="t" style="top:379px;font-size:21.5px;color:#000;font-weight:bold;-webkit-text-stroke:0.75px #000;left:782.58px;transform:scaleX(1.24);transform-origin:right;">10</span>
<span class="t" style="top:418px;font-size:21.5px;color:#000;font-weight:bold;-webkit-text-stroke:0.75px #000;left:794.53px;transform:scaleX(1.24);transform-origin:right;">9</span>
<span class="t" style="top:457px;font-size:21.5px;color:#000;font-weight:bold;-webkit-text-stroke:0.75px #000;left:782.58px;transform:scaleX(1.24);transform-origin:right;">10</span>
<span class="t" style="top:496px;font-size:21.5px;color:#000;font-weight:bold;-webkit-text-stroke:0.75px #000;left:794.53px;transform:scaleX(1.24);transform-origin:right;">8</span>
<span class="t" style="top:535px;font-size:21.5px;color:#000;font-weight:bold;-webkit-text-stroke:0.75px #000;left:782.58px;transform:scaleX(1.24);transform-origin:right;">10</span>
<span class="t" style="top:906px;font-size:21.5px;color:#000;font-weight:bold;-webkit-text-stroke:0.75px #000;left:210.50px;transform:scaleX(1.24);transform-origin:left;">Porcentaje</span>
<span class="t" style="top:906px;font-size:21.5px;color:#000;font-weight:bold;-webkit-text-stroke:0.75px #000;left:475.45px;transform:scaleX(1.24);transform-origin:right;">12%</span>
<div style="left:361.3px;top:894.1px;width:163.5px;height:42.4px;border:2px solid #217346;box-sizing:border-box;background:none"><div style="position:absolute;left:0;top:0;right:0;bottom:0;border:1.2px solid #D7F3E3;background:none"></div></div>
<div style="left:519.5px;top:931.2px;width:7.5px;height:7.5px;background:#217346;border:1px solid #fff;box-sizing:content-box;margin:-1px;"></div>
<div style="left:714.5px;top:546px;width:435.0px;height:321.5px;background:#F0F0F0;border:1.3px solid #6E6E6E;box-sizing:border-box;box-shadow:1px 1px 3px rgba(0,0,0,.18)"></div>
<div style="left:715.8px;top:547.3px;width:432.4px;height:31.1px;background:#fff;"></div>
<span class="t" style="top:556px;font-size:15px;color:#000;font-weight:bold;-webkit-text-stroke:0.3px #000;left:721.85px;letter-spacing:1.171px;">Nombre nuevo</span>
<span class="t" style="top:553px;font-size:19px;color:#222;-webkit-text-stroke:0.3px #222;left:1065.80px;">?</span>
<svg style="left:1114px;top:553px" width="18" height="18" viewBox="0 0 18 18"><path d="M1.5,1.5 L16,16 M16,1.5 L1.5,16" stroke="#222" stroke-width="1.5"/></svg>
<span class="t" style="top:592px;font-size:14.3px;color:#111;-webkit-text-stroke:0.45px #111;left:724.28px;letter-spacing:1.500px;">Nombre:</span>
<div style="left:725px;top:606.3px;width:10.5px;height:1.2px;background:#111;"></div>
<div style="left:828.6px;top:588.7px;width:310.8px;height:28.7px;background:#fff;border:1.2px solid #ABADB3;box-sizing:border-box;"></div>
<span class="t" style="top:596px;font-size:14.3px;color:#111;-webkit-text-stroke:0.45px #111;left:834.28px;letter-spacing:1.407px;">porcentaje</span>
<div style="left:914px;top:594px;width:1.2px;height:17.5px;background:#000;"></div>
<span class="t" style="top:625px;font-size:14.3px;color:#111;-webkit-text-stroke:0.45px #111;left:724.28px;letter-spacing:1.594px;">Ámbito:</span>
<div style="left:748.5px;top:639px;width:9px;height:1.2px;background:#111;"></div>
<div style="left:828.6px;top:622.3px;width:216.4px;height:30.7px;background:#fff;border:1.2px solid #ABADB3;box-sizing:border-box;"></div>
<div style="left:1021.8px;top:622.7px;width:23.2px;height:30px;background:#E1E1E1;border:1.2px solid #ADADAD;box-sizing:border-box;"></div>
<svg style="left:1026px;top:632px" width="15" height="10" viewBox="0 0 15 10"><path d="M1.5,1.5 L7.5,7.5 L13.5,1.5" fill="none" stroke="#444" stroke-width="1.5"/></svg>
<span class="t" style="top:631px;font-size:14.3px;color:#111;-webkit-text-stroke:0.45px #111;left:834.28px;letter-spacing:1.333px;">Libro</span>
<span class="t" style="top:661px;font-size:14.3px;color:#111;-webkit-text-stroke:0.45px #111;left:724.28px;letter-spacing:1.256px;">Comentario:</span>
<div style="left:735.5px;top:675px;width:9px;height:1.2px;background:#111;"></div>
<div style="left:828.6px;top:658.6px;width:310.8px;height:126.9px;background:#fff;border:1.2px solid #ABADB3;box-sizing:border-box;"></div>
<div style="left:1115px;top:661px;width:21px;height:121px;background:#F0F0F0;"></div>
<svg style="left:1118px;top:669px" width="14" height="9" viewBox="0 0 14 9"><path d="M1.5,7.5 L7,2 L12.5,7.5" fill="none" stroke="#BDBDBD" stroke-width="1.6"/></svg>
<svg style="left:1118px;top:765px" width="14" height="9" viewBox="0 0 14 9"><path d="M1.5,1.5 L7,7 L12.5,1.5" fill="none" stroke="#BDBDBD" stroke-width="1.6"/></svg>
<span class="t" style="top:794px;font-size:14.3px;color:#111;-webkit-text-stroke:0.45px #111;left:724.28px;letter-spacing:0.728px;">Se refiere a:</span>
<div style="left:725px;top:808px;width:8.5px;height:1.2px;background:#111;"></div>
<div style="left:828.6px;top:790.8px;width:310.8px;height:28px;background:#fff;border:1.2px solid #ABADB3;box-sizing:border-box;"></div>
<span class="t" style="top:800px;font-size:14.3px;color:#111;-webkit-text-stroke:0.45px #111;left:834.78px;letter-spacing:1.102px;">=Hoja1!$C$16</span>
<div style="left:1108.5px;top:791px;width:30.5px;height:28px;background:#fff;border:2px solid #B9BBC0;box-sizing:border-box;"></div>
<svg style="left:1115px;top:797px" width="16" height="16" viewBox="0 0 16 16"><path d="M8,11.5 V3 M3.3,6.6 L8,2 L12.7,6.6" fill="none" stroke="#000" stroke-width="2.1"/><path d="M2.5,14 H13.5" stroke="#000" stroke-width="1.6"/></svg>
<div style="left:910.6px;top:824.6px;width:106.1px;height:30.4px;background:#E5F1FB;border:2px solid #0078D7;box-sizing:border-box;"></div>
<span class="t" style="top:833px;font-size:14.3px;color:#111;-webkit-text-stroke:0.45px #111;left:934.68px;letter-spacing:1.291px;">Aceptar</span>
<div style="left:1032px;top:824.3px;width:105.7px;height:30.4px;background:#E1E1E1;border:1.2px solid #ADADAD;box-sizing:border-box;"></div>
<span class="t" style="top:833px;font-size:14.3px;color:#111;-webkit-text-stroke:0.45px #111;left:1053.59px;letter-spacing:0.959px;">Cancelar</span>
<svg style="left:1135px;top:853px" width="14" height="14" viewBox="0 0 14 14"><path d="M13,1 L1,13 M13,6 L6,13 M13,10.5 L10.5,13" stroke="#B0B0B0" stroke-width="1.2"/></svg>
<div class="frame" style="left:0;top:0;width:1341px;height:1084.5px"></div>
</div>
<div class="win" style="left:1219px;top:303px;width:1341px;height:962px">
<div style="left:0px;top:0px;width:1341px;height:51px;background:#217346;"></div>
<div style="left:902.6px;top:9.3px;width:438.4px;height:34.7px;background:#9ECDB4;"></div>
<svg style="left:928px;top:14px" width="26" height="26" viewBox="0 0 26 26"><circle cx="16" cy="9.5" r="6.3" fill="none" stroke="#2C7A52" stroke-width="1.7"/><path d="M11.5,14 L3,22.5" stroke="#2C7A52" stroke-width="1.9" stroke-linecap="round"/></svg>
<span class="t" style="top:18px;font-size:17.6px;color:#2C7A52;-webkit-text-stroke:0.3px #2C7A52;left:974.18px;transform:scaleX(0.9269);transform-origin:left;">Buscar</span>
<span class="t" style="top:17px;font-size:17.6px;color:#BFE8D2;-webkit-text-stroke:0.3px #BFE8D2;left:502.16px;transform:scaleX(0.9558);transform-origin:left;">Libro1</span>
<span class="t" style="top:17px;font-size:17.6px;color:#BFE8D2;-webkit-text-stroke:0.3px #BFE8D2;left:559.00px;">-</span>
<span class="t" style="top:17px;font-size:17.6px;color:#BFE8D2;-webkit-text-stroke:0.3px #BFE8D2;left:574.19px;transform:scaleX(0.9240);transform-origin:left;">Excel</span>
<svg style="left:31px;top:15px" width="26" height="26" viewBox="0 0 26 26" fill="none" stroke="#A9E4C3" stroke-width="1.7" stroke-linejoin="round"><path d="M2,2 H23.5 V23.5 H5.5 L2,20 Z"/><path d="M7,2 V10 H18.5 V2"/><path d="M7.5,23.5 V16 H18.5 V23.5"/></svg>
<svg style="left:73px;top:15px" width="26" height="27" viewBox="0 0 26 27" fill="none" stroke="#A9E4C3" stroke-width="1.8" stroke-linecap="round" stroke-linejoin="round"><path d="M3,3 V11 H11"/><path d="M3.5,10.5 C8,2.5 19,2 21.5,9.5 C23,15 17,19.5 10,24.5"/></svg>
<svg style="left:104.7px;top:23.55px" width="9.6" height="5.5" viewBox="-1 -1 9.6 5.5"><path d="M0,0 L3.8,3.5 L7.6,0" fill="none" stroke="#A9E4C3" stroke-width="1.8"/></svg>
<svg style="left:130px;top:15px" width="26" height="27" viewBox="0 0 26 27" fill="none" stroke="#5FA47E" stroke-width="1.6" stroke-linecap="round" stroke-linejoin="round"><path d="M21.5,3 V11 H13.5"/><path d="M21,10.5 C16.5,2.5 5.5,2 3,9.5 C1.5,15 7.5,19.5 14.5,24.5"/></svg>
<svg style="left:161px;top:23.55px" width="9.6" height="5.5" viewBox="-1 -1 9.6 5.5"><path d="M0,0 L3.8,3.5 L7.6,0" fill="none" stroke="#5FA47E" stroke-width="1.5"/></svg>
<svg style="left:191px;top:21px" width="14" height="12" viewBox="0 0 14 12" fill="none" stroke="#A9E4C3" stroke-width="1.8"><path d="M1.5,1.5 H12.5"/><path d="M2,5.5 L7,10 L12,5.5"/></svg>
<div style="left:0px;top:51px;width:1341px;height:182px;background:#F3F2F1;"></div>
<div style="left:0px;top:232.5px;width:1341px;height:1.2px;background:#D6D4D2;"></div>
<span class="t" style="top:65px;font-size:17.3px;color:#444444;-webkit-text-stroke:0.3px #444444;left:21.14px;letter-spacing:0.934px;">Archivo</span>
<span class="t" style="top:65px;font-size:17.3px;color:#444444;-webkit-text-stroke:0.3px #444444;left:127.14px;letter-spacing:0.677px;">Inicio</span>
<span class="t" style="top:65px;font-size:17.3px;color:#444444;-webkit-text-stroke:0.3px #444444;left:212.13px;letter-spacing:0.819px;">Insertar</span>
<span class="t" style="top:65px;font-size:17.3px;color:#444444;-webkit-text-stroke:0.3px #444444;left:318.63px;letter-spacing:0.957px;">Disposición de página</span>
<span class="t" style="top:65px;font-size:17.3px;color:#444444;-webkit-text-stroke:0.3px #444444;left:666.63px;letter-spacing:1.168px;">Datos</span>
<span class="t" style="top:65px;font-size:17.3px;color:#444444;-webkit-text-stroke:0.3px #444444;left:756.13px;letter-spacing:0.359px;">Revisar</span>
<span class="t" style="top:65px;font-size:17.3px;color:#444444;-webkit-text-stroke:0.3px #444444;left:856.63px;letter-spacing:0.530px;">Vista</span>
<span class="t" style="top:65px;font-size:17.3px;color:#444444;-webkit-text-stroke:0.3px #444444;left:938.13px;letter-spacing:1.132px;">Ayuda</span>
<span class="t" style="top:65px;font-size:17.3px;color:#444444;-webkit-text-stroke:0.3px #444444;left:1035.63px;letter-spacing:0.354px;">PDFelement</span>
<span class="t" style="top:65px;font-size:17.3px;color:#444444;-webkit-text-stroke:0.3px #444444;left:1179.13px;letter-spacing:0.751px;">Power Pivot</span>
<span class="t" style="top:65px;font-size:17.3px;color:#333;-webkit-text-stroke:0.4px #333;left:546.63px;letter-spacing:1.386px;">Fórmulas</span>
<div style="left:547px;top:87.5px;width:82px;height:4px;background:#217346;"></div>
<span class="t" style="top:102px;font-size:42px;color:#3B3B3B;font-style:italic;font-family:'Liberation Serif',serif;left:29.00px;letter-spacing:3px;">fx</span>
<span class="t" style="top:156px;font-size:17px;color:#444444;-webkit-text-stroke:0.3px #444444;left:17.15px;letter-spacing:0.008px;">Insertar</span>
<span class="t" style="top:179px;font-size:17px;color:#444444;-webkit-text-stroke:0.3px #444444;left:16.15px;letter-spacing:0.812px;">función</span>
<div style="left:86px;top:108px;width:1px;height:85px;background:#D2D0CE;"></div>
<svg style="left:119px;top:105px" width="35" height="42" viewBox="0 0 35 42"><path d="M31.5,5 V4 H4.5 L19.5,21 L4.5,37.5 H31.5 V36.5" fill="none" stroke="#3B3B3B" stroke-width="2.2" stroke-linejoin="miter"/></svg>
<span class="t" style="top:156px;font-size:17px;color:#444444;-webkit-text-stroke:0.3px #444444;left:95.15px;letter-spacing:0.450px;">Autosuma</span>
<svg style="left:130px;top:184.4px" width="10" height="6" viewBox="-1 -1 10 6"><path d="M0,0 L4.0,4 L8,0" fill="none" stroke="#444444" stroke-width="1.6"/></svg>
<svg style="left:232.5px;top:105.5px" width="31" height="41" viewBox="0 0 31 41"><path d="M29.6,1.4 H5 a3.6,3.6 0 0 0 -3.6,3.6 V36 a3.6,3.6 0 0 0 3.6,3.6 H29.6 Z" fill="#FBFBFB" stroke="#404040" stroke-width="1.8" stroke-linejoin="round"/><path d="M1.4,36.3 a3.3,3.3 0 0 1 3.3,-3.3 H29.6" fill="none" stroke="#404040" stroke-width="1.8"/><g transform="translate(-0.8,-0.6)"><path d="M16.5,7.5 L19.4,15 L27.3,15.3 L21.1,20.3 L23.3,28 L16.5,23.6 L9.7,28 L11.9,20.3 L5.7,15.3 L13.6,15 Z" fill="#EAF6FD" stroke="#3A96D0" stroke-width="1.8" stroke-linejoin="miter"/></g></svg>
<span class="t" style="top:156px;font-size:17px;color:#444444;-webkit-text-stroke:0.3px #444444;left:224.17px;transform:scaleX(0.9707);transform-origin:left;">Usado</span>
<span class="t" style="top:179px;font-size:17px;color:#444444;-webkit-text-stroke:0.3px #444444;left:185.15px;letter-spacing:0.330px;">recientemente</span>
<svg style="left:299px;top:184.4px" width="10" height="6" viewBox="-1 -1 10 6"><path d="M0,0 L4.0,4 L8,0" fill="none" stroke="#444444" stroke-width="1.6"/></svg>
<svg style="left:347.8px;top:105.5px" width="31" height="41" viewBox="0 0 31 41"><path d="M29.6,1.4 H5 a3.6,3.6 0 0 0 -3.6,3.6 V36 a3.6,3.6 0 0 0 3.6,3.6 H29.6 Z" fill="#FBFBFB" stroke="#404040" stroke-width="1.8" stroke-linejoin="round"/><path d="M1.4,36.3 a3.3,3.3 0 0 1 3.3,-3.3 H29.6" fill="none" stroke="#404040" stroke-width="1.8"/><g transform="translate(-0.8,-0.6)"><g fill="#A9DDB0" stroke="#5DBB6A" stroke-width="1.4"><path d="M7,12 V26 a9.5,3.6 0 0 0 19,0 V12"/><path d="M7,21.5 a9.5,3.6 0 0 0 19,0" fill="none"/><path d="M7,17 a9.5,3.6 0 0 0 19,0" fill="none"/><ellipse cx="16.5" cy="12" rx="9.5" ry="3.6" fill="#8FD49A"/></g></g></svg>
<span class="t" style="top:156px;font-size:17px;color:#444444;-webkit-text-stroke:0.3px #444444;left:320.67px;transform:scaleX(0.9752);transform-origin:left;">Financieras</span>
<svg style="left:358.5px;top:184.4px" width="10" height="6" viewBox="-1 -1 10 6"><path d="M0,0 L4.0,4 L8,0" fill="none" stroke="#444444" stroke-width="1.6"/></svg>
<svg style="left:428.5px;top:105.5px" width="31" height="41" viewBox="0 0 31 41"><path d="M29.6,1.4 H5 a3.6,3.6 0 0 0 -3.6,3.6 V36 a3.6,3.6 0 0 0 3.6,3.6 H29.6 Z" fill="#FBFBFB" stroke="#404040" stroke-width="1.8" stroke-linejoin="round"/><path d="M1.4,36.3 a3.3,3.3 0 0 1 3.3,-3.3 H29.6" fill="none" stroke="#404040" stroke-width="1.8"/><g transform="translate(-0.8,-0.6)"><text x="16.5" y="29.5" text-anchor="middle" font-family="Liberation Sans,sans-serif" font-size="31" fill="#B862C9">?</text></g></svg>
<span class="t" style="top:156px;font-size:17px;color:#444444;-webkit-text-stroke:0.3px #444444;left:415.65px;letter-spacing:-0.068px;">Lógicas</span>
<svg style="left:439px;top:184.4px" width="10" height="6" viewBox="-1 -1 10 6"><path d="M0,0 L4.0,4 L8,0" fill="none" stroke="#444444" stroke-width="1.6"/></svg>
<svg style="left:494.8px;top:105.5px" width="31" height="41" viewBox="0 0 31 41"><path d="M29.6,1.4 H5 a3.6,3.6 0 0 0 -3.6,3.6 V36 a3.6,3.6 0 0 0 3.6,3.6 H29.6 Z" fill="#FBFBFB" stroke="#404040" stroke-width="1.8" stroke-linejoin="round"/><path d="M1.4,36.3 a3.3,3.3 0 0 1 3.3,-3.3 H29.6" fill="none" stroke="#404040" stroke-width="1.8"/><g transform="translate(-0.8,-0.6)"><text x="16.5" y="29" text-anchor="middle" font-family="Liberation Sans,sans-serif" font-size="31" fill="#2E86C8">A</text></g></svg>
<span class="t" style="top:156px;font-size:17px;color:#444444;-webkit-text-stroke:0.3px #444444;left:490.15px;letter-spacing:0.265px;">Texto</span>
<svg style="left:505px;top:184.4px" width="10" height="6" viewBox="-1 -1 10 6"><path d="M0,0 L4.0,4 L8,0" fill="none" stroke="#444444" stroke-width="1.6"/></svg>
<svg style="left:559.8px;top:105.5px" width="31" height="41" viewBox="0 0 31 41"><path d="M29.6,1.4 H5 a3.6,3.6 0 0 0 -3.6,3.6 V36 a3.6,3.6 0 0 0 3.6,3.6 H29.6 Z" fill="#FBFBFB" stroke="#404040" stroke-width="1.8" stroke-linejoin="round"/><path d="M1.4,36.3 a3.3,3.3 0 0 1 3.3,-3.3 H29.6" fill="none" stroke="#404040" stroke-width="1.8"/><g transform="translate(-0.8,-0.6)"><circle cx="16.8" cy="17.5" r="9.7" fill="none" stroke="#E0575B" stroke-width="1.8"/><path d="M16.3,12 V18.3 H21.3" fill="none" stroke="#E0575B" stroke-width="1.8"/></g></svg>
<span class="t" style="top:156px;font-size:17px;color:#444444;-webkit-text-stroke:0.3px #444444;left:546.68px;transform:scaleX(0.9622);transform-origin:left;">Fecha y</span>
<span class="t" style="top:179px;font-size:17px;color:#444444;-webkit-text-stroke:0.3px #444444;left:551.15px;letter-spacing:0.056px;">hora</span>
<svg style="left:589px;top:184.4px" width="10" height="6" viewBox="-1 -1 10 6"><path d="M0,0 L4.0,4 L8,0" fill="none" stroke="#444444" stroke-width="1.6"/></svg>
<svg style="left:644.8px;top:105.5px" width="31" height="41" viewBox="0 0 31 41"><path d="M29.6,1.4 H5 a3.6,3.6 0 0 0 -3.6,3.6 V36 a3.6,3.6 0 0 0 3.6,3.6 H29.6 Z" fill="#FBFBFB" stroke="#404040" stroke-width="1.8" stroke-linejoin="round"/><path d="M1.4,36.3 a3.3,3.3 0 0 1 3.3,-3.3 H29.6" fill="none" stroke="#404040" stroke-width="1.8"/><g transform="translate(-0.8,-0.6)"><circle cx="14" cy="14.5" r="7.3" fill="none" stroke="#3A8FD0" stroke-width="1.8"/><path d="M19.3,20 L27,28" stroke="#3A8FD0" stroke-width="2.2" stroke-linecap="round"/></g></svg>
<span class="t" style="top:156px;font-size:17px;color:#444444;-webkit-text-stroke:0.3px #444444;left:616.15px;letter-spacing:-0.150px;">Búsqueda y</span>
<span class="t" style="top:179px;font-size:17px;color:#444444;-webkit-text-stroke:0.3px #444444;left:614.65px;letter-spacing:-0.001px;">referencia</span>
<svg style="left:694.5px;top:184.4px" width="10" height="6" viewBox="-1 -1 10 6"><path d="M0,0 L4.0,4 L8,0" fill="none" stroke="#444444" stroke-width="1.6"/></svg>
<svg style="left:768.5px;top:105.5px" width="31" height="41" viewBox="0 0 31 41"><path d="M29.6,1.4 H5 a3.6,3.6 0 0 0 -3.6,3.6 V36 a3.6,3.6 0 0 0 3.6,3.6 H29.6 Z" fill="#FBFBFB" stroke="#404040" stroke-width="1.8" stroke-linejoin="round"/><path d="M1.4,36.3 a3.3,3.3 0 0 1 3.3,-3.3 H29.6" fill="none" stroke="#404040" stroke-width="1.8"/><g transform="translate(-0.8,-0.6)"><text x="16.6" y="29.3" text-anchor="middle" font-family="Liberation Sans,sans-serif" font-size="31" fill="#3C9A5F">θ</text></g></svg>
<span class="t" style="top:156px;font-size:17px;color:#444444;-webkit-text-stroke:0.3px #444444;left:728.55px;letter-spacing:0.226px;">Matemáticas y</span>
<span class="t" style="top:179px;font-size:17px;color:#444444;-webkit-text-stroke:0.3px #444444;left:715.15px;letter-spacing:0.392px;">trigonométricas</span>
<svg style="left:842px;top:184.4px" width="10" height="6" viewBox="-1 -1 10 6"><path d="M0,0 L4.0,4 L8,0" fill="none" stroke="#444444" stroke-width="1.6"/></svg>
<svg style="left:892.7px;top:105.5px" width="31" height="41" viewBox="0 0 31 41"><path d="M29.6,1.4 H5 a3.6,3.6 0 0 0 -3.6,3.6 V36 a3.6,3.6 0 0 0 3.6,3.6 H29.6 Z" fill="#FBFBFB" stroke="#404040" stroke-width="1.8" stroke-linejoin="round"/><path d="M1.4,36.3 a3.3,3.3 0 0 1 3.3,-3.3 H29.6" fill="none" stroke="#404040" stroke-width="1.8"/><g transform="translate(-0.8,-0.6)"><circle cx="9" cy="17.5" r="2.1" fill="#D13438"/><circle cx="16.5" cy="17.5" r="2.1" fill="#D13438"/><circle cx="24" cy="17.5" r="2.1" fill="#D13438"/></g></svg>
<span class="t" style="top:156px;font-size:17px;color:#444444;-webkit-text-stroke:0.3px #444444;left:892.90px;letter-spacing:0.413px;">Más</span>
<span class="t" style="top:179px;font-size:17px;color:#444444;-webkit-text-stroke:0.3px #444444;left:862.15px;letter-spacing:0.427px;">funciones</span>
<svg style="left:942px;top:184.4px" width="10" height="6" viewBox="-1 -1 10 6"><path d="M0,0 L4.0,4 L8,0" fill="none" stroke="#444444" stroke-width="1.6"/></svg>
<span class="t" style="top:215px;font-size:14.6px;color:#444444;-webkit-text-stroke:0.3px #444444;left:399.27px;letter-spacing:0.994px;">Biblioteca de funciones</span>
<div style="left:968.5px;top:100px;width:1px;height:127px;background:#D2D0CE;"></div>
<div style="left:1331.5px;top:100px;width:1px;height:127px;background:#D2D0CE;"></div>
<svg style="left:1015px;top:102px" width="50" height="50" viewBox="0 0 50 50" fill="none"><path d="M42.2,23.5 V4.3 H25.4 L4.6,24.7 L21.5,42.6 L28,36.8" fill="#F8F8F8" stroke="#B9B8B7" stroke-width="2" stroke-linejoin="miter"/><circle cx="34.6" cy="11.7" r="1.8" fill="#B9B8B7"/><rect x="30.3" y="26" width="16.4" height="20.5" fill="#F3F2F1" stroke="#B9B8B7" stroke-width="1.8"/><rect x="33.6" y="30.6" width="3.2" height="3.2" stroke="#C8C8C8" stroke-width="1.3"/><rect x="33.6" y="37.6" width="3.2" height="3.2" stroke="#C8C8C8" stroke-width="1.3"/><path d="M39,32.2 H44 M39,39.2 H44" stroke="#C8C8C8" stroke-width="1.4"/></svg>
<span class="t" style="top:156px;font-size:17px;color:#B4B3B2;-webkit-text-stroke:0.3px #B4B3B2;left:983.15px;letter-spacing:0.535px;">Administrador</span>
<span class="t" style="top:179px;font-size:17px;color:#B4B3B2;-webkit-text-stroke:0.3px #B4B3B2;left:993.65px;letter-spacing:0.213px;">de nombres</span>
<svg style="left:1100px;top:102px" width="26" height="26" viewBox="0 0 26 26" fill="none" stroke="#B9B8B7" stroke-width="1.6" stroke-linejoin="round"><path d="M3,14 L14,4 L23.5,2.6 V11.8 L12,23.4 Z"/><path d="M9.5,15 L17,8.5 M12,18 L19.5,11.5"/><circle cx="19.6" cy="6.7" r="1.1" fill="#B9B8B7" stroke="none"/></svg>
<span class="t" style="top:109px;font-size:17px;color:#B4B3B2;-webkit-text-stroke:0.3px #B4B3B2;left:1128.95px;letter-spacing:0.376px;">Asignar nombre</span>
<svg style="left:1267px;top:113.5px" width="10" height="6" viewBox="-1 -1 10 6"><path d="M0,0 L4.0,4 L8,0" fill="none" stroke="#B4B3B2" stroke-width="1.6"/></svg>
<svg style="left:1100px;top:137px" width="28" height="28" viewBox="0 0 28 28" fill="none" stroke="#3B3B3B" stroke-width="1.6" stroke-linejoin="miter"><path d="M23.5,10 V3.2 H14 L3,13.2 L12,22.3"/><circle cx="19.6" cy="6.9" r="1.1" fill="#3B3B3B" stroke="none"/><text x="12.5" y="21.8" font-family="Liberation Serif,serif" font-style="italic" font-weight="bold" font-size="13.5" fill="#6A6A6A" stroke="none">fx</text></svg>
<span class="t" style="top:144px;font-size:17px;color:#444444;-webkit-text-stroke:0.3px #444444;left:1129.15px;letter-spacing:0.164px;">Utilizar en la fórmula</span>
<svg style="left:1291px;top:147.5px" width="10" height="6" viewBox="-1 -1 10 6"><path d="M0,0 L4.0,4 L8,0" fill="none" stroke="#444444" stroke-width="1.6"/></svg>
<svg style="left:1100px;top:173px" width="28" height="24" viewBox="0 0 28 24" fill="none"><rect x="2" y="8" width="7.5" height="6" fill="#C4C4C4"/><rect x="9.5" y="8" width="8" height="6" fill="#E3E3E3"/><rect x="2" y="14" width="7.5" height="7" fill="#C4C4C4"/><path d="M2.5,21 V2.8 H24.5 V8 M2.5,8 H24 M9.8,3 V8 M17.2,3 V8" stroke="#B9B8B7" stroke-width="1.5"/><path d="M12.5,17.3 L18.5,11.5 L25.2,10.6 V16 L18,22.6 Z" fill="#F8F8F8" stroke="#B9B8B7" stroke-width="1.5" stroke-linejoin="round"/></svg>
<span class="t" style="top:178px;font-size:17px;color:#B4B3B2;-webkit-text-stroke:0.3px #B4B3B2;left:1129.17px;transform:scaleX(0.9754);transform-origin:left;">Crear desde la selección</span>
<span class="t" style="top:215px;font-size:14.6px;color:#444444;-webkit-text-stroke:0.3px #444444;left:1079.07px;letter-spacing:1.248px;">Nombres definidos</span>
<div style="left:0px;top:233.7px;width:1341px;height:97px;background:#E6E6E6;"></div>
<div style="left:10px;top:249.5px;width:145.5px;height:35.5px;background:#fff;border:1px solid #CFCFCF;box-sizing:border-box;"></div>
<div style="left:200.5px;top:249.5px;width:156.5px;height:35.5px;background:#fff;border:1px solid #CFCFCF;box-sizing:border-box;"></div>
<div style="left:363px;top:249.5px;width:976px;height:35.5px;background:#fff;border:1px solid #CFCFCF;box-sizing:border-box;"></div>
<div style="left:176.7px;top:260.1px;width:2.5px;height:2.5px;background:#B0B0B0;border-radius:50%;"></div>
<div style="left:176.7px;top:266px;width:2.5px;height:2.5px;background:#B0B0B0;border-radius:50%;"></div>
<div style="left:176.7px;top:271.8px;width:2.5px;height:2.5px;background:#B0B0B0;border-radius:50%;"></div>
<svg style="left:135px;top:262px" width="12" height="7" viewBox="0 0 12 7"><path d="M0.5,0.5 H11.5 L6,6.5 Z" fill="#5E5E5E"/></svg>
<svg style="left:218px;top:260px" width="17" height="15" viewBox="0 0 17 15"><path d="M1.2,1 L15.8,14 M15.8,1 L1.2,14" stroke="#5A5A5A" stroke-width="2.4"/></svg>
<svg style="left:269px;top:259px" width="20" height="17" viewBox="0 0 20 17"><path d="M1.6,10.5 L7.3,15.4 L18.6,2.2" fill="none" stroke="#5A5A5A" stroke-width="3.1"/></svg>
<span class="t" style="top:254px;font-size:21px;color:#5E5E5E;font-weight:bold;font-style:italic;font-family:'Liberation Serif',serif;-webkit-text-stroke:0.3px #5E5E5E;left:321.50px;letter-spacing:-0.5px;">fx</span>
<span class="t" style="top:260px;font-size:17.3px;color:#444444;-webkit-text-stroke:0.3px #444444;left:18.64px;letter-spacing:1.097px;">SUMA</span>
<span class="t" style="top:260px;font-size:17.3px;color:#444444;-webkit-text-stroke:0.3px #444444;left:378.53px;letter-spacing:1.543px;">=porcentaje*E2</span>
<div style="left:44px;top:331px;width:1297px;height:631px;background:#fff;"></div>
<div style="left:204.5px;top:331px;width:158.5px;height:37.42px;background:#F4B084;"></div>
<div style="left:363px;top:331px;width:160.5px;height:37.42px;background:#A9D08E;"></div>
<div style="left:523.5px;top:331px;width:126.5px;height:37.42px;background:#FFD966;"></div>
<div style="left:650px;top:331px;width:161.5px;height:37.42px;background:#8EA9DB;"></div>
<div style="left:811.5px;top:331px;width:161.5px;height:37.42px;background:#D0CECE;"></div>
<div style="left:204.5px;top:895.8px;width:319px;height:39.4px;background:#00B050;"></div>
<div style="left:204px;top:331px;width:1px;height:631px;background:#D4D4D4;"></div>
<div style="left:362.5px;top:331px;width:1px;height:631px;background:#D4D4D4;"></div>
<div style="left:523px;top:331px;width:1px;height:631px;background:#D4D4D4;"></div>
<div style="left:649.5px;top:331px;width:1px;height:631px;background:#D4D4D4;"></div>
<div style="left:811px;top:331px;width:1px;height:631px;background:#D4D4D4;"></div>
<div style="left:972.5px;top:331px;width:1px;height:631px;background:#D4D4D4;"></div>
<div style="left:1133.9px;top:331px;width:1px;height:631px;background:#D4D4D4;"></div>
<div style="left:1295.3px;top:331px;width:1px;height:631px;background:#D4D4D4;"></div>
<div style="left:44px;top:368.42px;width:1297px;height:1px;background:#D4D4D4;"></div>
<div style="left:44px;top:407.34px;width:1297px;height:1px;background:#D4D4D4;"></div>
<div style="left:44px;top:446.26px;width:1297px;height:1px;background:#D4D4D4;"></div>
<div style="left:44px;top:485.18px;width:1297px;height:1px;background:#D4D4D4;"></div>
<div style="left:44px;top:524.1px;width:1297px;height:1px;background:#D4D4D4;"></div>
<div style="left:44px;top:563.02px;width:1297px;height:1px;background:#D4D4D4;"></div>
<div style="left:44px;top:601.94px;width:1297px;height:1px;background:#D4D4D4;"></div>
<div style="left:44px;top:640.86px;width:1297px;height:1px;background:#D4D4D4;"></div>
<div style="left:44px;top:679.78px;width:1297px;height:1px;background:#D4D4D4;"></div>
<div style="left:44px;top:718.7px;width:1297px;height:1px;background:#D4D4D4;"></div>
<div style="left:44px;top:757.62px;width:1297px;height:1px;background:#D4D4D4;"></div>
<div style="left:44px;top:796.54px;width:1297px;height:1px;background:#D4D4D4;"></div>
<div style="left:44px;top:835.46px;width:1297px;height:1px;background:#D4D4D4;"></div>
<div style="left:44px;top:865.3px;width:1297px;height:1px;background:#D4D4D4;"></div>
<div style="left:44px;top:895.3px;width:1297px;height:1px;background:#D4D4D4;"></div>
<div style="left:44px;top:934.7px;width:1297px;height:1px;background:#D4D4D4;"></div>
<div style="left:204px;top:331px;width:159.2px;height:38.32px;background:#F4B084;"></div>
<div style="left:362.5px;top:331px;width:161.2px;height:38.32px;background:#A9D08E;"></div>
<div style="left:523px;top:331px;width:127.2px;height:38.32px;background:#FFD966;"></div>
<div style="left:649.5px;top:331px;width:162.2px;height:38.32px;background:#8EA9DB;"></div>
<div style="left:811px;top:331px;width:161.5px;height:38.32px;background:#D0CECE;"></div>
<div style="left:362.5px;top:896.3px;width:1px;height:38.4px;background:#00B050;"></div>
<div style="left:0px;top:300px;width:44px;height:662px;background:#E6E6E6;"></div>
<span class="t" style="top:306px;font-size:18.6px;color:#3A3A3A;-webkit-text-stroke:0.3px #3A3A3A;left:118.05px;">A</span>
<span class="t" style="top:306px;font-size:18.6px;color:#3A3A3A;-webkit-text-stroke:0.3px #3A3A3A;left:277.55px;">B</span>
<span class="t" style="top:306px;font-size:18.6px;color:#3A3A3A;-webkit-text-stroke:0.3px #3A3A3A;left:436.53px;">C</span>
<span class="t" style="top:306px;font-size:18.6px;color:#3A3A3A;-webkit-text-stroke:0.3px #3A3A3A;left:580.03px;">D</span>
<span class="t" style="top:306px;font-size:18.6px;color:#3A3A3A;-webkit-text-stroke:0.3px #3A3A3A;left:724.55px;">E</span>
<div style="left:812px;top:300.5px;width:161px;height:29px;background:#D2D2D2;"></div>
<span class="t" style="top:306px;font-size:18.6px;color:#217346;-webkit-text-stroke:0.3px #217346;left:886.57px;">F</span>
<span class="t" style="top:306px;font-size:18.6px;color:#3A3A3A;-webkit-text-stroke:0.3px #3A3A3A;left:1046.47px;">G</span>
<span class="t" style="top:306px;font-size:18.6px;color:#3A3A3A;-webkit-text-stroke:0.3px #3A3A3A;left:1208.38px;">H</span>
<span class="t" style="top:306px;font-size:18.6px;color:#3A3A3A;-webkit-text-stroke:0.3px #3A3A3A;left:1373.81px;">I</span>
<div style="left:203.9px;top:300.5px;width:1.3px;height:30px;background:#BDBDBD;"></div>
<div style="left:362.4px;top:300.5px;width:1.3px;height:30px;background:#BDBDBD;"></div>
<div style="left:522.9px;top:300.5px;width:1.3px;height:30px;background:#BDBDBD;"></div>
<div style="left:649.4px;top:300.5px;width:1.3px;height:30px;background:#BDBDBD;"></div>
<div style="left:810.9px;top:300.5px;width:1.3px;height:30px;background:#BDBDBD;"></div>
<div style="left:972.4px;top:300.5px;width:1.3px;height:30px;background:#BDBDBD;"></div>
<div style="left:1133.8px;top:300.5px;width:1.3px;height:30px;background:#BDBDBD;"></div>
<div style="left:1295.2px;top:300.5px;width:1.3px;height:30px;background:#BDBDBD;"></div>
<div style="left:0px;top:329.3px;width:1341px;height:1.6px;background:#A6A6A6;"></div>
<div style="left:811.5px;top:328px;width:161.5px;height:3px;background:#217346;"></div>
<svg style="left:20px;top:306px" width="19" height="19" viewBox="0 0 19 19"><path d="M18,1 V18 H1 Z" fill="#B7B7B7"/></svg>
<div style="left:0px;top:368.22px;width:43px;height:1.4px;background:#B4B4B4;"></div>
<span class="t" style="top:343px;font-size:18.6px;color:#3A3A3A;-webkit-text-stroke:0.3px #3A3A3A;left:17.58px;">1</span>
<div style="left:0px;top:369.42px;width:43px;height:38.42px;background:#D2D2D2;"></div>
<div style="left:0px;top:407.14px;width:43px;height:1.4px;background:#B4B4B4;"></div>
<span class="t" style="top:382px;font-size:18.6px;color:#217346;-webkit-text-stroke:0.3px #217346;left:17.58px;">2</span>
<div style="left:0px;top:446.06px;width:43px;height:1.4px;background:#B4B4B4;"></div>
<span class="t" style="top:421px;font-size:18.6px;color:#3A3A3A;-webkit-text-stroke:0.3px #3A3A3A;left:17.58px;">3</span>
<div style="left:0px;top:484.98px;width:43px;height:1.4px;background:#B4B4B4;"></div>
<span class="t" style="top:460px;font-size:18.6px;color:#3A3A3A;-webkit-text-stroke:0.3px #3A3A3A;left:17.58px;">4</span>
<div style="left:0px;top:523.9px;width:43px;height:1.4px;background:#B4B4B4;"></div>
<span class="t" style="top:499px;font-size:18.6px;color:#3A3A3A;-webkit-text-stroke:0.3px #3A3A3A;left:17.58px;">5</span>
<div style="left:0px;top:562.82px;width:43px;height:1.4px;background:#B4B4B4;"></div>
<span class="t" style="top:538px;font-size:18.6px;color:#3A3A3A;-webkit-text-stroke:0.3px #3A3A3A;left:17.58px;">6</span>
<div style="left:0px;top:601.74px;width:43px;height:1.4px;background:#B4B4B4;"></div>
<span class="t" style="top:577px;font-size:18.6px;color:#3A3A3A;-webkit-text-stroke:0.3px #3A3A3A;left:17.58px;">7</span>
<div style="left:0px;top:640.66px;width:43px;height:1.4px;background:#B4B4B4;"></div>
<span class="t" style="top:615px;font-size:18.6px;color:#3A3A3A;-webkit-text-stroke:0.3px #3A3A3A;left:17.58px;">8</span>
<div style="left:0px;top:679.58px;width:43px;height:1.4px;background:#B4B4B4;"></div>
<span class="t" style="top:654px;font-size:18.6px;color:#3A3A3A;-webkit-text-stroke:0.3px #3A3A3A;left:17.58px;">9</span>
<div style="left:0px;top:718.5px;width:43px;height:1.4px;background:#B4B4B4;"></div>
<span class="t" style="top:693px;font-size:18.6px;color:#3A3A3A;-webkit-text-stroke:0.3px #3A3A3A;left:12.41px;">10</span>
<div style="left:0px;top:757.42px;width:43px;height:1.4px;background:#B4B4B4;"></div>
<span class="t" style="top:732px;font-size:18.6px;color:#3A3A3A;-webkit-text-stroke:0.3px #3A3A3A;left:13.09px;">11</span>
<div style="left:0px;top:796.34px;width:43px;height:1.4px;background:#B4B4B4;"></div>
<span class="t" style="top:771px;font-size:18.6px;color:#3A3A3A;-webkit-text-stroke:0.3px #3A3A3A;left:12.41px;">12</span>
<div style="left:0px;top:835.26px;width:43px;height:1.4px;background:#B4B4B4;"></div>
<span class="t" style="top:810px;font-size:18.6px;color:#3A3A3A;-webkit-text-stroke:0.3px #3A3A3A;left:12.41px;">13</span>
<div style="left:0px;top:865.1px;width:43px;height:1.4px;background:#B4B4B4;"></div>
<span class="t" style="top:845px;font-size:18.6px;color:#3A3A3A;-webkit-text-stroke:0.3px #3A3A3A;left:12.41px;">14</span>
<div style="left:0px;top:895.1px;width:43px;height:1.4px;background:#B4B4B4;"></div>
<span class="t" style="top:875px;font-size:18.6px;color:#3A3A3A;-webkit-text-stroke:0.3px #3A3A3A;left:12.41px;">15</span>
<div style="left:0px;top:934.5px;width:43px;height:1.4px;background:#B4B4B4;"></div>
<span class="t" style="top:909px;font-size:18.6px;color:#3A3A3A;-webkit-text-stroke:0.3px #3A3A3A;left:12.41px;">16</span>
<div style="left:0px;top:964.75px;width:43px;height:1.4px;background:#B4B4B4;"></div>
<span class="t" style="top:945px;font-size:18.6px;color:#3A3A3A;-webkit-text-stroke:0.3px #3A3A3A;left:12.41px;">17</span>
<div style="left:42.8px;top:300.5px;width:1.4px;height:662px;background:#A6A6A6;"></div>
<div style="left:41.5px;top:368.92px;width:2.7px;height:38.92px;background:#217346;"></div>
<span class="t" style="top:340px;font-size:21.5px;color:#000;font-weight:bold;-webkit-text-stroke:0.75px #000;left:240.72px;transform:scaleX(1.24);transform-origin:center;">Gráficas</span>
<span class="t" style="top:340px;font-size:21.5px;color:#000;font-weight:bold;-webkit-text-stroke:0.75px #000;left:422.34px;transform:scaleX(1.24);transform-origin:center;">Mes</span>
<span class="t" style="top:340px;font-size:21.5px;color:#000;font-weight:bold;-webkit-text-stroke:0.75px #000;left:536.80px;transform:scaleX(1.24);transform-origin:center;">Gastos</span>
<span class="t" style="top:340px;font-size:21.5px;color:#000;font-weight:bold;-webkit-text-stroke:0.75px #000;left:684.76px;transform:scaleX(1.24);transform-origin:center;">Cantidad</span>
<span class="t" style="top:340px;font-size:21.5px;color:#000;font-weight:bold;-webkit-text-stroke:0.75px #000;left:846.73px;transform:scaleX(1.24);transform-origin:center;">Facturar</span>
<span class="t" style="top:379px;font-size:21.5px;color:#0563C1;font-weight:bold;-webkit-text-stroke:0.75px #0563C1;left:237.73px;transform:scaleX(1.24);transform-origin:center;">Gráfica 1</span>
<span class="t" style="top:379px;font-size:21.5px;color:#000;font-weight:bold;-webkit-text-stroke:0.75px #000;left:412.78px;transform:scaleX(1.24);transform-origin:center;">Enero</span>
<span class="t" style="top:379px;font-size:21.5px;color:#000;font-weight:bold;-webkit-text-stroke:0.75px #000;left:574.79px;transform:scaleX(1.24);transform-origin:center;">33</span>
<span class="t" style="top:418px;font-size:21.5px;color:#0563C1;font-weight:bold;-webkit-text-stroke:0.75px #0563C1;left:237.73px;transform:scaleX(1.24);transform-origin:center;">Gráfica 2</span>
<span class="t" style="top:418px;font-size:21.5px;color:#000;font-weight:bold;-webkit-text-stroke:0.75px #000;left:403.22px;transform:scaleX(1.24);transform-origin:center;">Febrero</span>
<span class="t" style="top:418px;font-size:21.5px;color:#000;font-weight:bold;-webkit-text-stroke:0.75px #000;left:574.79px;transform:scaleX(1.24);transform-origin:center;">58</span>
<span class="t" style="top:457px;font-size:21.5px;color:#0563C1;font-weight:bold;-webkit-text-stroke:0.75px #0563C1;left:237.73px;transform:scaleX(1.24);transform-origin:center;">Gráfica 3</span>
<span class="t" style="top:457px;font-size:21.5px;color:#000;font-weight:bold;-webkit-text-stroke:0.75px #000;left:412.19px;transform:scaleX(1.24);transform-origin:center;">Marzo</span>
<span class="t" style="top:457px;font-size:21.5px;color:#000;font-weight:bold;-webkit-text-stroke:0.75px #000;left:574.79px;transform:scaleX(1.24);transform-origin:center;">49</span>
<span class="t" style="top:496px;font-size:21.5px;color:#0563C1;font-weight:bold;-webkit-text-stroke:0.75px #0563C1;left:237.73px;transform:scaleX(1.24);transform-origin:center;">Gráfica 4</span>
<span class="t" style="top:496px;font-size:21.5px;color:#000;font-weight:bold;-webkit-text-stroke:0.75px #000;left:418.76px;transform:scaleX(1.24);transform-origin:center;">Abril</span>
<span class="t" style="top:496px;font-size:21.5px;color:#000;font-weight:bold;-webkit-text-stroke:0.75px #000;left:574.79px;transform:scaleX(1.24);transform-origin:center;">17</span>
<span class="t" style="top:535px;font-size:21.5px;color:#0563C1;font-weight:bold;-webkit-text-stroke:0.75px #0563C1;left:237.73px;transform:scaleX(1.24);transform-origin:center;">Gráfica 5</span>
<span class="t" style="top:535px;font-size:21.5px;color:#000;font-weight:bold;-webkit-text-stroke:0.75px #000;left:415.77px;transform:scaleX(1.24);transform-origin:center;">Mayo</span>
<span class="t" style="top:535px;font-size:21.5px;color:#000;font-weight:bold;-webkit-text-stroke:0.75px #000;left:574.79px;transform:scaleX(1.24);transform-origin:center;">16</span>
<span class="t" style="top:574px;font-size:21.5px;color:#0563C1;font-weight:bold;-webkit-text-stroke:0.75px #0563C1;left:237.73px;transform:scaleX(1.24);transform-origin:center;">Gráfica 6</span>
<span class="t" style="top:574px;font-size:21.5px;color:#000;font-weight:bold;-webkit-text-stroke:0.75px #000;left:414.58px;transform:scaleX(1.24);transform-origin:center;">Junio</span>
<span class="t" style="top:574px;font-size:21.5px;color:#000;font-weight:bold;-webkit-text-stroke:0.75px #000;left:574.79px;transform:scaleX(1.24);transform-origin:center;">42</span>
<span class="t" style="top:613px;font-size:21.5px;color:#0563C1;font-weight:bold;-webkit-text-stroke:0.75px #0563C1;left:237.73px;transform:scaleX(1.24);transform-origin:center;">Gráfica 7</span>
<span class="t" style="top:613px;font-size:21.5px;color:#000;font-weight:bold;-webkit-text-stroke:0.75px #000;left:418.16px;transform:scaleX(1.24);transform-origin:center;">Julio</span>
<span class="t" style="top:613px;font-size:21.5px;color:#000;font-weight:bold;-webkit-text-stroke:0.75px #000;left:574.79px;transform:scaleX(1.24);transform-origin:center;">51</span>
<span class="t" style="top:652px;font-size:21.5px;color:#0563C1;font-weight:bold;-webkit-text-stroke:0.75px #0563C1;left:237.73px;transform:scaleX(1.24);transform-origin:center;">Gráfica 8</span>
<span class="t" style="top:652px;font-size:21.5px;color:#000;font-weight:bold;-webkit-text-stroke:0.75px #000;left:406.23px;transform:scaleX(1.24);transform-origin:center;">Agosto</span>
<span class="t" style="top:652px;font-size:21.5px;color:#000;font-weight:bold;-webkit-text-stroke:0.75px #000;left:574.79px;transform:scaleX(1.24);transform-origin:center;">89</span>
<span class="t" style="top:691px;font-size:21.5px;color:#0563C1;font-weight:bold;-webkit-text-stroke:0.75px #0563C1;left:237.73px;transform:scaleX(1.24);transform-origin:center;">Gráfica 9</span>
<span class="t" style="top:691px;font-size:21.5px;color:#000;font-weight:bold;-webkit-text-stroke:0.75px #000;left:384.70px;transform:scaleX(1.24);transform-origin:center;">Septiembre</span>
<span class="t" style="top:691px;font-size:21.5px;color:#000;font-weight:bold;-webkit-text-stroke:0.75px #000;left:574.79px;transform:scaleX(1.24);transform-origin:center;">61</span>
<span class="t" style="top:730px;font-size:21.5px;color:#0563C1;font-weight:bold;-webkit-text-stroke:0.75px #0563C1;left:231.76px;transform:scaleX(1.24);transform-origin:center;">Gráfica 10</span>
<span class="t" style="top:730px;font-size:21.5px;color:#000;font-weight:bold;-webkit-text-stroke:0.75px #000;left:402.03px;transform:scaleX(1.24);transform-origin:center;">Octubre</span>
<span class="t" style="top:730px;font-size:21.5px;color:#000;font-weight:bold;-webkit-text-stroke:0.75px #000;left:574.79px;transform:scaleX(1.24);transform-origin:center;">23</span>
<span class="t" style="top:768px;font-size:21.5px;color:#0563C1;font-weight:bold;-webkit-text-stroke:0.75px #0563C1;left:232.35px;transform:scaleX(1.24);transform-origin:center;">Gráfica 11</span>
<span class="t" style="top:768px;font-size:21.5px;color:#000;font-weight:bold;-webkit-text-stroke:0.75px #000;left:387.69px;transform:scaleX(1.24);transform-origin:center;">Noviembre</span>
<span class="t" style="top:768px;font-size:21.5px;color:#000;font-weight:bold;-webkit-text-stroke:0.75px #000;left:574.79px;transform:scaleX(1.24);transform-origin:center;">78</span>
<span class="t" style="top:807px;font-size:21.5px;color:#0563C1;font-weight:bold;-webkit-text-stroke:0.75px #0563C1;left:231.76px;transform:scaleX(1.24);transform-origin:center;">Gráfica 12</span>
<span class="t" style="top:807px;font-size:21.5px;color:#000;font-weight:bold;-webkit-text-stroke:0.75px #000;left:391.27px;transform:scaleX(1.24);transform-origin:center;">Diciembre</span>
<span class="t" style="top:807px;font-size:21.5px;color:#000;font-weight:bold;-webkit-text-stroke:0.75px #000;left:574.79px;transform:scaleX(1.24);transform-origin:center;">47</span>
<div style="left:650.5px;top:369.42px;width:160.5px;height:37.92px;background:#FBE9E9;"></div>
<span class="t" style="top:379px;font-size:21.5px;color:#000;font-weight:bold;-webkit-text-stroke:0.75px #000;left:782.58px;transform:scaleX(1.24);transform-origin:right;">10</span>
<span class="t" style="top:418px;font-size:21.5px;color:#000;font-weight:bold;-webkit-text-stroke:0.75px #000;left:794.53px;transform:scaleX(1.24);transform-origin:right;">9</span>
<span class="t" style="top:457px;font-size:21.5px;color:#000;font-weight:bold;-webkit-text-stroke:0.75px #000;left:782.58px;transform:scaleX(1.24);transform-origin:right;">10</span>
<span class="t" style="top:496px;font-size:21.5px;color:#000;font-weight:bold;-webkit-text-stroke:0.75px #000;left:794.53px;transform:scaleX(1.24);transform-origin:right;">8</span>
<span class="t" style="top:535px;font-size:21.5px;color:#000;font-weight:bold;-webkit-text-stroke:0.75px #000;left:782.58px;transform:scaleX(1.24);transform-origin:right;">10</span>
<span class="t" style="top:574px;font-size:21.5px;color:#000;font-weight:bold;-webkit-text-stroke:0.75px #000;left:782.58px;transform:scaleX(1.24);transform-origin:right;">10</span>
<span class="t" style="top:613px;font-size:21.5px;color:#000;font-weight:bold;-webkit-text-stroke:0.75px #000;left:794.53px;transform:scaleX(1.24);transform-origin:right;">7</span>
<span class="t" style="top:652px;font-size:21.5px;color:#000;font-weight:bold;-webkit-text-stroke:0.75px #000;left:794.53px;transform:scaleX(1.24);transform-origin:right;">8</span>
<span class="t" style="top:691px;font-size:21.5px;color:#000;font-weight:bold;-webkit-text-stroke:0.75px #000;left:782.58px;transform:scaleX(1.24);transform-origin:right;">10</span>
<span class="t" style="top:730px;font-size:21.5px;color:#000;font-weight:bold;-webkit-text-stroke:0.75px #000;left:794.53px;transform:scaleX(1.24);transform-origin:right;">9</span>
<span class="t" style="top:768px;font-size:21.5px;color:#000;font-weight:bold;-webkit-text-stroke:0.75px #000;left:794.53px;transform:scaleX(1.24);transform-origin:right;">9</span>
<span class="t" style="top:807px;font-size:21.5px;color:#000;font-weight:bold;-webkit-text-stroke:0.75px #000;left:794.53px;transform:scaleX(1.24);transform-origin:right;">0</span>
<span class="t" style="top:906px;font-size:21.5px;color:#000;font-weight:bold;-webkit-text-stroke:0.75px #000;left:210.50px;transform:scaleX(1.24);transform-origin:left;">Porcentaje</span>
<span class="t" style="top:906px;font-size:21.5px;color:#000;font-weight:bold;-webkit-text-stroke:0.75px #000;left:475.45px;transform:scaleX(1.24);transform-origin:right;">12%</span>
<div style="left:648.5px;top:367.42px;width:164px;height:41.42px;border:2.2px solid #C5333F;box-sizing:border-box;background:none"></div>
<div style="left:647.2px;top:366.12px;width:5.8px;height:5.8px;background:#C5333F;border:1px solid #fff;margin:-1px;"></div>
<div style="left:808.7px;top:366.12px;width:5.8px;height:5.8px;background:#C5333F;border:1px solid #fff;margin:-1px;"></div>
<div style="left:647.2px;top:405.04px;width:5.8px;height:5.8px;background:#C5333F;border:1px solid #fff;margin:-1px;"></div>
<div style="left:808.7px;top:405.04px;width:5.8px;height:5.8px;background:#C5333F;border:1px solid #fff;margin:-1px;"></div>
<div style="left:810.5px;top:367.92px;width:164px;height:41.42px;border:2.2px solid #217346;box-sizing:border-box;background:#fff"></div>
<div style="left:969.5px;top:404.34px;width:7px;height:7px;background:#217346;border:1px solid #fff;margin:-1px;"></div>
<div style="left:808.7px;top:366.12px;width:5.8px;height:5.8px;background:#C5333F;border:1px solid #fff;margin:-1px;"></div>
<div style="left:808.7px;top:405.04px;width:5.8px;height:5.8px;background:#C5333F;border:1px solid #fff;margin:-1px;"></div>
<span class="t" style="top:381px;font-size:19.5px;color:#222;-webkit-text-stroke:0.3px #222;left:814.02px;letter-spacing:0.859px;">=</span>
<span class="t" style="top:381px;font-size:19.5px;color:#5B7FCB;-webkit-text-stroke:0.3px #5B7FCB;left:826.42px;letter-spacing:0.919px;">porcentaje</span>
<span class="t" style="top:380px;font-size:24px;color:#111;font-weight:bold;-webkit-text-stroke:0.3px #111;left:926.90px;">*</span>
<span class="t" style="top:381px;font-size:19.5px;color:#D15A60;-webkit-text-stroke:0.3px #D15A60;left:937.59px;transform:scaleX(0.9367);transform-origin:left;">E2</span>
<div style="left:361.3px;top:894.1px;width:163.9px;height:42.8px;border:2px solid #3D6CC4;box-sizing:border-box;background:none"><div style="position:absolute;left:0;top:0;right:0;bottom:0;border:1.2px solid #C9E8D6;background:none"></div></div>
<div class="frame" style="left:0;top:0;width:1341px;height:962px"></div>
</div>
</body></html>
